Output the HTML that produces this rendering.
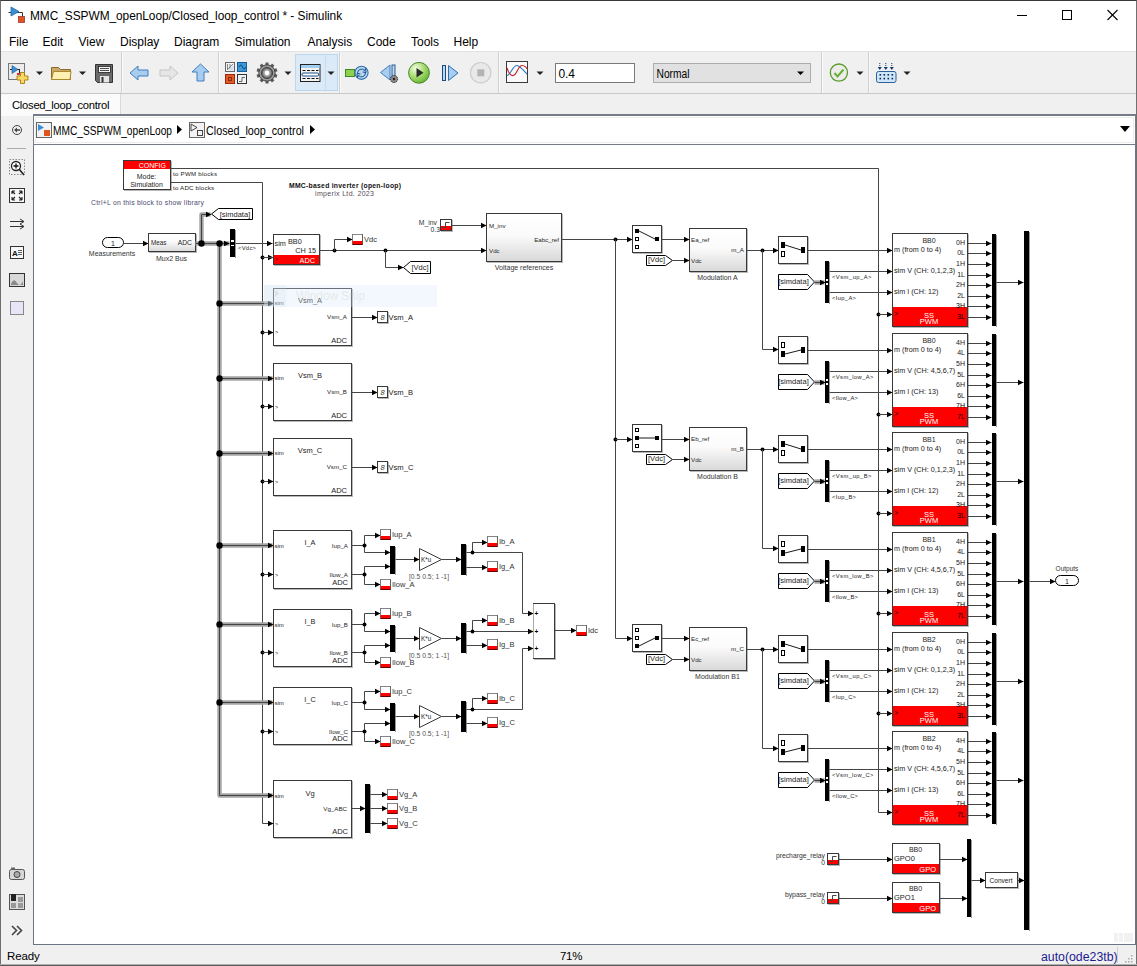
<!DOCTYPE html><html><head><meta charset="utf-8"><style>

*{margin:0;padding:0;box-sizing:border-box}
html,body{width:1137px;height:966px;overflow:hidden;background:#fff;font-family:'Liberation Sans',sans-serif}
.a{position:absolute;white-space:nowrap}
svg text{font-family:'Liberation Sans',sans-serif}

</style></head><body>
<div class="a" style="left:0;top:0;width:1137px;height:966px;background:#fff"></div>
<div class="a" style="left:30px;top:8.5px;font-size:11.9px;color:#000;letter-spacing:-0.05px">MMC_SSPWM_openLoop/Closed_loop_control * - Simulink</div>
<div class="a" style="left:9px;top:35px;font-size:12px;color:#000">File</div>
<div class="a" style="left:42.5px;top:35px;font-size:12px;color:#000">Edit</div>
<div class="a" style="left:78.5px;top:35px;font-size:12px;color:#000">View</div>
<div class="a" style="left:120px;top:35px;font-size:12px;color:#000">Display</div>
<div class="a" style="left:174px;top:35px;font-size:12px;color:#000">Diagram</div>
<div class="a" style="left:234.5px;top:35px;font-size:12px;color:#000">Simulation</div>
<div class="a" style="left:307.5px;top:35px;font-size:12px;color:#000">Analysis</div>
<div class="a" style="left:367px;top:35px;font-size:12px;color:#000">Code</div>
<div class="a" style="left:411px;top:35px;font-size:12px;color:#000">Tools</div>
<div class="a" style="left:453.5px;top:35px;font-size:12px;color:#000">Help</div>
<div class="a" style="left:1px;top:51px;width:1135px;height:1px;background:#e3e3e3"></div>
<div class="a" style="left:1px;top:52px;width:1135px;height:41px;background:#f0f0f0"></div>
<div class="a" style="left:1px;top:93px;width:1135px;height:1px;background:#c8c8c8"></div>
<div class="a" style="left:1px;top:94px;width:1135px;height:22px;background:#f0f0f0"></div>
<div class="a" style="left:1px;top:94px;width:120px;height:22px;background:#fbfbfb;border-right:1px solid #d9d9d9"></div>
<div class="a" style="left:12px;top:99px;font-size:11.2px;color:#000;letter-spacing:-0.25px">Closed_loop_control</div>
<div class="a" style="left:1px;top:116px;width:1135px;height:850px;background:#f0f0f0"></div>
<div class="a" style="left:33px;top:114px;width:1103px;height:32px;background:#fff;border:1px solid #767c86;border-top:2px solid #767c86;border-bottom:2px solid #767c86"></div>
<div class="a" style="left:35px;top:117px;width:1099px;height:26px;background:#fff;border:1px solid #ececec"></div>
<div class="a" style="left:33px;top:145px;width:1103px;height:800px;background:#fff;border-left:1px solid #6d7585;border-bottom:1px solid #6d7585;border-right:1px solid #6d7585"></div>
<div class="a" style="left:0;top:0;width:1137px;height:966px;border:1px solid #707070;border-top-color:#3a3a3a"></div>
<div class="a" style="left:0;top:964px;width:1137px;height:1px;background:#b0b0b0"></div>
<div class="a" style="left:0;top:965px;width:1137px;height:1px;background:#5a5a5a"></div>
<div class="a" style="left:7px;top:950px;font-size:11.5px;color:#000;letter-spacing:-0.15px">Ready</div>
<div class="a" style="left:560px;top:950px;font-size:11.5px;color:#000;letter-spacing:-0.3px">71%</div>
<div class="a" style="left:1041px;top:950px;font-size:12.3px;color:#1c1c92">auto(ode23tb)</div>
<div class="a" style="left:1117px;top:947px;width:1px;height:16px;background:#d0d0d0"></div>
<svg class="a" style="left:0;top:0" width="1137" height="966" viewBox="0 0 1137 966">
<defs>
<linearGradient id="g1" x1="0" y1="0" x2="0" y2="1"><stop offset="0" stop-color="#ffffff"/><stop offset="0.45" stop-color="#fbfbfb"/><stop offset="1" stop-color="#d8d8d8"/></linearGradient>
<radialGradient id="gbtn" cx="0.35" cy="0.3" r="0.8"><stop offset="0" stop-color="#f4fbe8"/><stop offset="0.5" stop-color="#a6dc6e"/><stop offset="1" stop-color="#5aae2c"/></radialGradient>
</defs>
<polyline points="8.5,12.5 22.5,12.5 22.5,17" fill="none" stroke="#333" stroke-width="1"/>
<polygon points="11,7 19,11.5 11,16" fill="#3d8ed0" stroke="#2a6aa8" stroke-width="0.8"/>
<rect x="18.5" y="16.5" width="6" height="6" fill="#e0541e" stroke="#a33" stroke-width="0.8"/>
<line x1="1017" y1="15.5" x2="1027" y2="15.5" stroke="#000" stroke-width="1"/>
<rect x="1062.5" y="10.5" width="9" height="9" fill="none" stroke="#000" stroke-width="1"/>
<line x1="1107.5" y1="10" x2="1117.5" y2="20" stroke="#000" stroke-width="1.1"/>
<line x1="1117.5" y1="10" x2="1107.5" y2="20" stroke="#000" stroke-width="1.1"/>
<rect x="8.5" y="63.5" width="16" height="16" fill="#ececec" stroke="#777" stroke-width="1"/>
<line x1="10" y1="69.5" x2="20" y2="69.5" stroke="#222"/><line x1="19.5" y1="69.5" x2="19.5" y2="74" stroke="#222"/>
<polygon points="12,65.5 18,69.5 12,73.5" fill="#3d8ed0" stroke="#1d5a9a" stroke-width="0.6"/>
<rect x="17" y="73" width="3" height="2" fill="#d33"/>
<polygon points="20.5,72.5 24.5,72.5 24.5,76 28,76 28,80 24.5,80 24.5,83.5 20.5,83.5 20.5,80 17,80 17,76 20.5,76" fill="#f8d860" stroke="#a87a10" stroke-width="0.9"/>
<polygon points="36.0,71.5 43.0,71.5 39.5,75" fill="#222"/>
<path d="M51.5,79.5 V67.5 h7 l2,2 h10 v10 z" fill="#c9a86a" stroke="#8a6a2a" stroke-width="1"/>
<path d="M51.5,79.5 L53.5,71.5 H71 L70,79.5 Z" fill="#fdf0b0" stroke="#a8882a" stroke-width="1"/>
<polygon points="79.0,71.5 86.0,71.5 82.5,75" fill="#222"/>
<path d="M95.5,64.5 H112.5 V82.5 H97.5 L95.5,80.5 Z" fill="#6a6a6a" stroke="#333" stroke-width="1"/>
<rect x="98.5" y="66.5" width="12" height="6" fill="#f4f4f4" stroke="#222" stroke-width="0.8"/>
<path d="M100,68.5 h9 M100,70.5 h9" stroke="#222" stroke-width="0.8"/>
<rect x="100" y="76" width="9" height="6.5" fill="#e6e6e6"/>
<rect x="101.5" y="77" width="2" height="5.5" fill="#333"/>
<line x1="121.5" y1="52" x2="121.5" y2="93" stroke="#d0d0d0" stroke-width="1"/>
<line x1="122.5" y1="52" x2="122.5" y2="93" stroke="#fafafa" stroke-width="1"/>
<polygon points="130,73 138,66 138,70 148,70 148,76 138,76 138,80" fill="#a9cdef" stroke="#3f7fc0" stroke-width="1"/>
<polygon points="178,73 170,66 170,70 160,70 160,76 170,76 170,80" fill="#e6e6e6" stroke="#c4c4c4" stroke-width="1"/>
<polygon points="200.5,64 209,72 204,72 204,81 197,81 197,72 192,72" fill="#a9cdef" stroke="#3f7fc0" stroke-width="1"/>
<line x1="218.5" y1="52" x2="218.5" y2="93" stroke="#d0d0d0" stroke-width="1"/>
<line x1="219.5" y1="52" x2="219.5" y2="93" stroke="#fafafa" stroke-width="1"/>
<rect x="225.5" y="62.5" width="9" height="9" fill="#f4f4f4" stroke="#666"/>
<path d="M227.5,64 v6 M230,64 v5 M233,64 l-6,6" stroke="#777" stroke-width="0.9" fill="none"/>
<path d="M228,70.5 L233.5,65 V70.5 Z" fill="#cfe0ee"/>
<rect x="237.5" y="62.5" width="9" height="9" fill="#3a9ad8" stroke="#1d5a9a"/>
<path d="M239,67 q2,-4 3.5,0 q1.5,4 3.5,0" stroke="#0d3a6a" stroke-width="0.9" fill="none"/>
<rect x="225.5" y="74.5" width="9" height="9" fill="#e45a24" stroke="#9a2a10"/>
<rect x="228.5" y="77.5" width="3" height="3" fill="none" stroke="#8a2a10"/>
<rect x="237.5" y="74.5" width="9" height="9" fill="#eef3f7" stroke="#333"/>
<path d="M239,81.5 h3 v-4 h3" stroke="#555" stroke-width="0.9" fill="none"/>
<rect x="265.5" y="62.5" width="3" height="4" fill="#5a5a5a" transform="rotate(0 267 73)"/><rect x="265.5" y="62.5" width="3" height="4" fill="#5a5a5a" transform="rotate(36 267 73)"/><rect x="265.5" y="62.5" width="3" height="4" fill="#5a5a5a" transform="rotate(72 267 73)"/><rect x="265.5" y="62.5" width="3" height="4" fill="#5a5a5a" transform="rotate(108 267 73)"/><rect x="265.5" y="62.5" width="3" height="4" fill="#5a5a5a" transform="rotate(144 267 73)"/><rect x="265.5" y="62.5" width="3" height="4" fill="#5a5a5a" transform="rotate(180 267 73)"/><rect x="265.5" y="62.5" width="3" height="4" fill="#5a5a5a" transform="rotate(216 267 73)"/><rect x="265.5" y="62.5" width="3" height="4" fill="#5a5a5a" transform="rotate(252 267 73)"/><rect x="265.5" y="62.5" width="3" height="4" fill="#5a5a5a" transform="rotate(288 267 73)"/><rect x="265.5" y="62.5" width="3" height="4" fill="#5a5a5a" transform="rotate(324 267 73)"/>
<circle cx="267" cy="73" r="8.2" fill="#9a9a9a" stroke="#3a3a3a" stroke-width="0.9"/>
<circle cx="267" cy="73" r="5.6" fill="#6a6a6a" stroke="#333" stroke-width="0.8"/>
<circle cx="267" cy="73" r="4" fill="#9c9c9c"/>
<circle cx="267" cy="73" r="2.4" fill="#fff"/>
<polygon points="284.5,71.5 291.5,71.5 288,75" fill="#222"/>
<rect x="295.5" y="54.5" width="42" height="36" fill="#dce9f6" stroke="#b9d7f0" stroke-width="1"/>
<line x1="325.5" y1="55" x2="325.5" y2="90" stroke="#c4dcf0"/>
<rect x="300.5" y="64.5" width="19.5" height="17" fill="#f2f2f2" stroke="#222"/>
<rect x="301" y="65" width="18.5" height="3" fill="#9fd0f2"/>
<path d="M302.5,70.5 h3 M307,70.5 h3 M311.5,70.5 h3 M316,70.5 h2.5 M302.5,78.5 h3 M307,78.5 h3 M311.5,78.5 h3 M316,78.5 h2.5" stroke="#111" stroke-width="1"/>
<rect x="302" y="73" width="16.5" height="3" rx="1" fill="#fff" stroke="#1a4f8f" stroke-width="1"/>
<polygon points="327.5,71.5 334.5,71.5 331,75" fill="#222"/>
<line x1="339.5" y1="52" x2="339.5" y2="93" stroke="#d0d0d0" stroke-width="1"/>
<line x1="340.5" y1="52" x2="340.5" y2="93" stroke="#fafafa" stroke-width="1"/>
<rect x="345.5" y="69.5" width="9" height="7" fill="#8fd050" stroke="#3c8a22"/>
<circle cx="361.5" cy="72.8" r="6.6" fill="#b8d8f2" stroke="#2f6fae" stroke-width="1.1"/>
<path d="M357.5,73 a4,4 0 0 1 7,-2.5 l1,-2 l0.5,4 l-3.5,-0.5 M365.5,73 a4,4 0 0 1 -7,2.5 l-1,2 l-0.5,-4 l3.5,0.5" fill="none" stroke="#1d4f8a" stroke-width="1"/>
<polygon points="380.5,72.5 390,65 390,80" fill="#a9cdef" stroke="#3f7fc0"/>
<rect x="392" y="65" width="3" height="14" fill="#b8daf4" stroke="#2a5a90"/>
<circle cx="394" cy="79" r="3.6" fill="#8a8a8a" stroke="#222" stroke-width="1" stroke-dasharray="1.2,0.8"/>
<circle cx="394" cy="79" r="1.2" fill="#222"/>
<circle cx="419" cy="72.8" r="10.4" fill="url(#gbtn)" stroke="#4a8a2a" stroke-width="1"/>
<polygon points="416.5,68 423.5,72.8 416.5,77.6" fill="#2a2a2a"/>
<rect x="442.5" y="65.5" width="3" height="15" fill="#b8daf4" stroke="#1d4a80"/>
<polygon points="448.5,65.5 458,73 448.5,80.5" fill="#a9cdef" stroke="#2f6fae"/>
<circle cx="480.7" cy="72.7" r="10.2" fill="#e9e9e9" stroke="#cdcdcd" stroke-width="1.2"/>
<rect x="477.3" y="69.3" width="7" height="7" fill="#b4b4b4"/>
<line x1="498.5" y1="52" x2="498.5" y2="93" stroke="#d0d0d0" stroke-width="1"/>
<line x1="499.5" y1="52" x2="499.5" y2="93" stroke="#fafafa" stroke-width="1"/>
<rect x="506.5" y="61.5" width="21" height="21" fill="#fafafa" stroke="#3a3a3a"/>
<path d="M507,75.5 C510,76 513,65 517,65.5 C520,66 524,71 527,74" fill="none" stroke="#2a7ac8" stroke-width="1.2"/>
<path d="M507,68 C509,74 511,76 513,75.5 C517,75 518,65.5 522,65.5 C525,65.5 527,68 527,69" fill="none" stroke="#c8282a" stroke-width="1.2"/>
<polygon points="536.5,71.5 543.5,71.5 540,75" fill="#222"/>
<rect x="555.5" y="63.5" width="79" height="19" fill="#fff" stroke="#7a7a7a"/>
<rect x="653.5" y="63.5" width="157" height="19" fill="#e1e1e1" stroke="#adadad"/>
<polygon points="797,71.5 804,71.5 800.5,75" fill="#000"/>
<line x1="821.5" y1="52" x2="821.5" y2="93" stroke="#d0d0d0" stroke-width="1"/>
<line x1="822.5" y1="52" x2="822.5" y2="93" stroke="#fafafa" stroke-width="1"/>
<circle cx="838.9" cy="72.6" r="8.6" fill="#ececec" stroke="#5a9a2a" stroke-width="1.3"/>
<path d="M834.5,73 l3,3.5 l6,-7" fill="none" stroke="#6ab030" stroke-width="2"/>
<polygon points="856.5,71.5 863.5,71.5 860,75" fill="#222"/>
<line x1="868.5" y1="52" x2="868.5" y2="93" stroke="#d0d0d0" stroke-width="1"/>
<line x1="869.5" y1="52" x2="869.5" y2="93" stroke="#fafafa" stroke-width="1"/>
<rect x="876.5" y="71.5" width="19.5" height="11" rx="2" fill="#cfe5f8" stroke="#2d5f9a"/>
<rect x="879.5" y="74" width="1.6" height="1.6" fill="#0a2a60"/><rect x="879.5" y="77.8" width="1.6" height="1.6" fill="#0a2a60"/>
<rect x="883.5" y="74" width="1.6" height="1.6" fill="#0a2a60"/><rect x="883.5" y="77.8" width="1.6" height="1.6" fill="#0a2a60"/>
<rect x="887.5" y="74" width="1.6" height="1.6" fill="#0a2a60"/><rect x="887.5" y="77.8" width="1.6" height="1.6" fill="#0a2a60"/>
<rect x="891.5" y="74" width="1.6" height="1.6" fill="#0a2a60"/><rect x="891.5" y="77.8" width="1.6" height="1.6" fill="#0a2a60"/>
<line x1="879.8" y1="63" x2="879.8" y2="68" stroke="#0a3a70" stroke-dasharray="1,1"/><polygon points="877.8,67 881.8,67 879.8,70" fill="#0a3a70"/>
<line x1="885.8" y1="63" x2="885.8" y2="68" stroke="#0a3a70" stroke-dasharray="1,1"/><polygon points="883.8,67 887.8,67 885.8,70" fill="#0a3a70"/>
<line x1="891.8" y1="63" x2="891.8" y2="68" stroke="#0a3a70" stroke-dasharray="1,1"/><polygon points="889.8,67 893.8,67 891.8,70" fill="#0a3a70"/>
<polygon points="903.5,71.5 910.5,71.5 907,75" fill="#222"/>
<circle cx="17" cy="130" r="4.5" fill="none" stroke="#444" stroke-width="1"/>
<polygon points="14,130 17,127.5 17,132.5" fill="#444"/><line x1="16" y1="130" x2="20" y2="130" stroke="#444" stroke-width="1.5"/>
<rect x="36.5" y="122.5" width="15" height="15" fill="#f2f2f2" stroke="#666"/>
<polygon points="38,124 44,127.5 38,131" fill="#3d8ed0"/>
<rect x="44" y="130" width="6" height="6" fill="#e0541e"/>
<polygon points="177,125 182,129.5 177,134" fill="#000"/>
<rect x="189.5" y="122.5" width="15" height="15" fill="#f2f2f2" stroke="#666"/>
<polygon points="191,124 197,127.5 191,131" fill="none" stroke="#333" stroke-width="0.9"/>
<rect x="197.5" y="130.5" width="5" height="5" fill="none" stroke="#333" stroke-width="0.9"/>
<polygon points="310,125 315,129.5 310,134" fill="#000"/>
<polygon points="1120,126 1130,126 1125,132" fill="#000"/>
<text x="53" y="134.5" font-size="12" fill="#000" textLength="119" lengthAdjust="spacingAndGlyphs">MMC_SSPWM_openLoop</text>
<text x="206" y="134.5" font-size="12" fill="#000" textLength="98" lengthAdjust="spacingAndGlyphs">Closed_loop_control</text>
<line x1="7" y1="148.5" x2="26" y2="148.5" stroke="#aaa"/>
<rect x="9.5" y="159.5" width="15" height="15" fill="none" stroke="#888" stroke-dasharray="1.5,1.5"/>
<circle cx="16" cy="166" r="4.5" fill="#fff" stroke="#222" stroke-width="1.3"/>
<line x1="19" y1="169" x2="24" y2="175" stroke="#222" stroke-width="1.6"/>
<path d="M13.5,166 h5 M16,163.5 v5" stroke="#111" stroke-width="1.3"/>
<rect x="9.5" y="188.5" width="15" height="14" fill="#f7f7f7" stroke="#333"/>
<path d="M12,191 l3,3 M12,191 h3 M12,191 v3 M22,191 l-3,3 M22,191 h-3 M22,191 v3 M12,200 l3,-3 M12,200 h3 M12,200 v-3 M22,200 l-3,-3 M22,200 h-3 M22,200 v-3" stroke="#222" stroke-width="1.1" fill="none"/>
<path d="M10,221.5 h13 M10,226.5 h13 M20,219 l4,2.5 l-4,2.5 M20,224 l4,2.5 l-4,2.5" stroke="#333" stroke-width="1" fill="none"/>
<rect x="10.5" y="246.5" width="13" height="12" fill="#f7f7f7" stroke="#333"/>
<text x="12" y="256" font-size="8" font-weight="bold" fill="#111">A</text>
<path d="M18,250.5 h4 M18,252.5 h4 M18,254.5 h4" stroke="#333" stroke-width="0.8"/>
<rect x="9.5" y="273.5" width="15" height="13" fill="#d9d9d9" stroke="#333"/>
<path d="M11,284 q3,-7 6,-1 q3,5 6,-2 v4 h-12 z" fill="#8a8a8a"/>
<rect x="10.5" y="301.5" width="13" height="13" fill="#e6e6f6" stroke="#888"/>
<rect x="9.5" y="869.5" width="15" height="10" rx="2" fill="#d6d6d6" stroke="#555"/>
<circle cx="17" cy="874.5" r="3" fill="#aaa" stroke="#444"/>
<rect x="11" y="867.5" width="4" height="2" fill="#666"/>
<rect x="9.5" y="894.5" width="15" height="15" fill="#ddd" stroke="#555"/>
<rect x="11" y="894" width="5" height="7" fill="#222"/>
<rect x="18" y="897" width="5" height="5" fill="#999"/><rect x="11" y="903" width="5" height="5" fill="#999"/><rect x="18" y="903" width="5" height="5" fill="#999"/>
<path d="M12,926 l4.5,4.5 l-4.5,4.5 M17,926 l4.5,4.5 l-4.5,4.5" stroke="#444" stroke-width="1.6" fill="none"/>
<rect x="1131" y="955" width="1.5" height="1.5" fill="#aaa"/>
<rect x="1128" y="958" width="1.5" height="1.5" fill="#aaa"/>
<rect x="1131" y="958" width="1.5" height="1.5" fill="#aaa"/>
<rect x="1125" y="961" width="1.5" height="1.5" fill="#aaa"/>
<rect x="1128" y="961" width="1.5" height="1.5" fill="#aaa"/>
<rect x="1131" y="961" width="1.5" height="1.5" fill="#aaa"/>
<rect x="1114" y="933" width="4" height="9" fill="#f1f1f1"/><rect x="1119" y="933" width="4" height="9" fill="#f1f1f1"/><rect x="1124" y="933" width="9" height="9" fill="#f1f1f1"/>
<text x="558.5" y="78" font-size="12" fill="#000" textLength="16.5" lengthAdjust="spacing">0.4</text>
<text x="656.5" y="78" font-size="12" fill="#000" textLength="33" lengthAdjust="spacingAndGlyphs">Normal</text>
<rect x="124.5" y="161.5" width="47" height="29" fill="none" stroke="#b8b8b8" stroke-width="1"/>
<rect x="123.5" y="160.5" width="47" height="29" fill="#fff" stroke="#383838" stroke-width="1"/>
<rect x="124" y="161" width="46" height="8" fill="#f00"/>
<text x="166" y="167.5" font-size="7" text-anchor="end" fill="#fff" font-weight="normal" >CONFIG</text>
<text x="146.5" y="178.5" font-size="7" text-anchor="middle" fill="#1e1e1e" font-weight="normal" >Mode:</text>
<text x="146.5" y="186.5" font-size="7" text-anchor="middle" fill="#1e1e1e" font-weight="normal" >Simulation</text>
<polyline points="170.5,168.5 878.5,168.5 878.5,812.5 892.5,812.5" fill="none" stroke="#454545" stroke-width="1"/>
<polygon points="887.0,809.7 892.5,812.5 887.0,815.3" fill="#000"/>
<text x="173" y="175.5" font-size="6.2" text-anchor="start" fill="#222" font-weight="normal" textLength="44" lengthAdjust="spacing">to PWM blocks</text>
<polyline points="170.5,182.5 262.5,182.5 262.5,823.5 273.5,823.5" fill="none" stroke="#454545" stroke-width="1"/>
<polygon points="268.0,820.7 273.5,823.5 268.0,826.3" fill="#000"/>
<text x="173" y="189.5" font-size="6.2" text-anchor="start" fill="#222" font-weight="normal" textLength="41" lengthAdjust="spacing">to ADC blocks</text>
<text x="91" y="205" font-size="6.8" text-anchor="start" fill="#4a4a70" font-weight="normal" textLength="113" lengthAdjust="spacing">Ctrl+L on this block to show library</text>
<text x="289" y="187.5" font-size="6.8" text-anchor="start" fill="#111" font-weight="bold" textLength="112" lengthAdjust="spacing">MMC-based inverter (open-loop)</text>
<text x="315" y="196" font-size="7" text-anchor="start" fill="#5a4a5a" font-weight="normal" textLength="59" lengthAdjust="spacing">imperix Ltd. 2023</text>
<rect x="102.5" y="237.5" width="21" height="10" rx="5" fill="#fff" stroke="#000"/>
<text x="113" y="245.5" font-size="7" text-anchor="middle" fill="#1e1e1e" font-weight="normal" >1</text>
<text x="112" y="256" font-size="7" text-anchor="middle" fill="#333" font-weight="normal" >Measurements</text>
<polyline points="123.5,243.5 148.5,243.5" fill="none" stroke="#454545" stroke-width="1"/>
<polygon points="143.0,240.7 148.5,243.5 143.0,246.3" fill="#000"/>
<rect x="149.5" y="234.5" width="47" height="18" fill="none" stroke="#b8b8b8" stroke-width="1"/>
<rect x="148.5" y="233.5" width="47" height="18" fill="url(#g1)" stroke="#383838" stroke-width="1"/>
<text x="151" y="245" font-size="6.3" text-anchor="start" fill="#1e1e1e" font-weight="normal" >Meas</text>
<text x="192" y="245" font-size="6.8" text-anchor="end" fill="#1e1e1e" font-weight="normal" >ADC</text>
<text x="171.5" y="261" font-size="7" text-anchor="middle" fill="#333" font-weight="normal" >Mux2 Bus</text>
<polyline points="195.5,243.5 229.5,243.5" fill="none" stroke="#a4a4a4" stroke-width="4.4" stroke-linejoin="round"/>
<polyline points="195.5,243.5 229.5,243.5" fill="none" stroke="#444" stroke-width="1"/>
<polygon points="224.0,240.7 229.5,243.5 224.0,246.3" fill="#000"/>
<polyline points="201.5,243.5 201.5,214.5 210.5,214.5" fill="none" stroke="#a4a4a4" stroke-width="4.4" stroke-linejoin="round"/>
<polyline points="201.5,243.5 201.5,214.5 210.5,214.5" fill="none" stroke="#444" stroke-width="1"/>
<polygon points="206.0,211.7 211.5,214.5 206.0,217.3" fill="#000"/>
<polygon points="211.5,214.0 218.5,208.5 252.5,208.5 252.5,219.5 218.5,219.5" fill="#fff" stroke="#000" stroke-width="1"/>
<text x="235.0" y="216.5" font-size="7.5" text-anchor="middle" fill="#1e1e1e" font-weight="normal" >[simdata]</text>
<rect x="230" y="229" width="5" height="28" fill="#000"/>
<rect x="235" y="230" width="1" height="28" fill="#9a9a9a"/>
<rect x="231" y="240" width="3" height="2" fill="#fff"/>
<rect x="231" y="245" width="3" height="1" fill="#fff"/>
<text x="238" y="250" font-size="5.8" text-anchor="start" fill="#222" font-weight="normal" textLength="18" lengthAdjust="spacing">&lt;Vdc&gt;</text>
<polyline points="235.5,243.5 272.5,243.5" fill="none" stroke="#454545" stroke-width="1"/>
<polygon points="267.0,240.7 272.5,243.5 267.0,246.3" fill="#000"/>
<polyline points="219.5,243.5 219.5,795.5 272.5,795.5" fill="none" stroke="#a4a4a4" stroke-width="4.4" stroke-linejoin="round"/>
<polyline points="219.5,243.5 219.5,795.5 272.5,795.5" fill="none" stroke="#444" stroke-width="1"/>
<polygon points="268.0,792.7 273.5,795.5 268.0,798.3" fill="#000"/>
<polyline points="219.5,303.5 272.5,303.5" fill="none" stroke="#a4a4a4" stroke-width="4.4" stroke-linejoin="round"/>
<polyline points="219.5,303.5 272.5,303.5" fill="none" stroke="#444" stroke-width="1"/>
<polygon points="268.0,300.7 273.5,303.5 268.0,306.3" fill="#000"/>
<polyline points="219.5,378.5 272.5,378.5" fill="none" stroke="#a4a4a4" stroke-width="4.4" stroke-linejoin="round"/>
<polyline points="219.5,378.5 272.5,378.5" fill="none" stroke="#444" stroke-width="1"/>
<polygon points="268.0,375.7 273.5,378.5 268.0,381.3" fill="#000"/>
<polyline points="219.5,453.5 272.5,453.5" fill="none" stroke="#a4a4a4" stroke-width="4.4" stroke-linejoin="round"/>
<polyline points="219.5,453.5 272.5,453.5" fill="none" stroke="#444" stroke-width="1"/>
<polygon points="268.0,450.7 273.5,453.5 268.0,456.3" fill="#000"/>
<polyline points="219.5,545.5 272.5,545.5" fill="none" stroke="#a4a4a4" stroke-width="4.4" stroke-linejoin="round"/>
<polyline points="219.5,545.5 272.5,545.5" fill="none" stroke="#444" stroke-width="1"/>
<polygon points="268.0,542.7 273.5,545.5 268.0,548.3" fill="#000"/>
<polyline points="219.5,624.5 272.5,624.5" fill="none" stroke="#a4a4a4" stroke-width="4.4" stroke-linejoin="round"/>
<polyline points="219.5,624.5 272.5,624.5" fill="none" stroke="#444" stroke-width="1"/>
<polygon points="268.0,621.7 273.5,624.5 268.0,627.3" fill="#000"/>
<polyline points="219.5,702.5 272.5,702.5" fill="none" stroke="#a4a4a4" stroke-width="4.4" stroke-linejoin="round"/>
<polyline points="219.5,702.5 272.5,702.5" fill="none" stroke="#444" stroke-width="1"/>
<polygon points="268.0,699.7 273.5,702.5 268.0,705.3" fill="#000"/>
<circle cx="219.5" cy="303.5" r="3.2" fill="#000"/>
<circle cx="219.5" cy="378.5" r="3.2" fill="#000"/>
<circle cx="219.5" cy="453.5" r="3.2" fill="#000"/>
<circle cx="219.5" cy="545.5" r="3.2" fill="#000"/>
<circle cx="219.5" cy="624.5" r="3.2" fill="#000"/>
<circle cx="219.5" cy="702.5" r="3.2" fill="#000"/>
<circle cx="201.5" cy="243.5" r="3.2" fill="#000"/>
<circle cx="219.5" cy="243.5" r="3.2" fill="#000"/>
<rect x="274.5" y="235.5" width="46" height="30" fill="none" stroke="#b8b8b8" stroke-width="1"/>
<rect x="273.5" y="234.5" width="46" height="30" fill="#fff" stroke="#383838" stroke-width="1"/>
<rect x="274" y="255" width="45" height="9" fill="#f00"/>
<text x="274.5" y="245.5" font-size="7.3" text-anchor="start" fill="#1e1e1e" font-weight="normal" >sim</text>
<text x="288" y="244" font-size="7.3" text-anchor="start" fill="#1e1e1e" font-weight="normal" >BB0</text>
<text x="316" y="252.5" font-size="7.3" text-anchor="end" fill="#1e1e1e" font-weight="normal" >CH 15</text>
<text x="315" y="262.5" font-size="7.3" text-anchor="end" fill="#fff" font-weight="normal" >ADC</text>
<text x="275" y="260.5" font-size="5" text-anchor="start" fill="#000" font-weight="normal" >&gt;</text>
<circle cx="262.5" cy="257.5" r="2" fill="#000"/>
<polygon points="268.0,254.7 273.5,257.5 268.0,260.3" fill="#000"/>
<polyline points="262.5,257.5 273.5,257.5" fill="none" stroke="#454545" stroke-width="1"/>
<polyline points="319.5,250.5 486.5,250.5" fill="none" stroke="#454545" stroke-width="1"/>
<polygon points="481.0,247.7 486.5,250.5 481.0,253.3" fill="#000"/>
<circle cx="334.5" cy="250.5" r="2" fill="#000"/>
<polyline points="334.5,250.5 334.5,239.5 352.5,239.5" fill="none" stroke="#454545" stroke-width="1"/>
<polygon points="347.0,236.7 352.5,239.5 347.0,242.3" fill="#000"/>
<rect x="352.5" y="234.5" width="10" height="10" fill="#fff" stroke="#858585" stroke-width="1"/>
<rect x="352" y="241" width="11" height="4" fill="#f00"/>
<rect x="352" y="244" width="11" height="1" fill="#600"/>
<rect x="352" y="234" width="1" height="11" fill="#777" fill-opacity="0.6"/>
<rect x="362" y="234" width="1" height="11" fill="#555" fill-opacity="0.7"/>
<text x="364" y="241.6" font-size="7.5" text-anchor="start" fill="#333" font-weight="normal" >Vdc</text>
<circle cx="385.5" cy="250.5" r="2" fill="#000"/>
<polyline points="385.5,250.5 385.5,267.5 403.5,267.5" fill="none" stroke="#454545" stroke-width="1"/>
<polygon points="398.0,264.7 403.5,267.5 398.0,270.3" fill="#000"/>
<polygon points="403.5,267.5 410.5,261.5 430.5,261.5 430.5,273.5 410.5,273.5" fill="#fff" stroke="#000" stroke-width="1"/>
<text x="420.0" y="270.0" font-size="7.5" text-anchor="middle" fill="#1e1e1e" font-weight="normal" >[Vdc]</text>
<rect x="441.5" y="220.5" width="11" height="11" fill="none" stroke="#b8b8b8" stroke-width="1"/>
<rect x="440.5" y="219.5" width="11" height="11" fill="#fff" stroke="#383838" stroke-width="1"/>
<rect x="441" y="226" width="10" height="4" fill="#f00"/>
<polyline points="442.5,227.5 445.5,227.5 445.5,222.5 449.5,222.5" fill="none" stroke="#454545" stroke-width="1"/>
<text x="437" y="225" font-size="6.8" text-anchor="end" fill="#333" font-weight="normal" >M_inv</text>
<text x="440" y="231.5" font-size="6.8" text-anchor="end" fill="#333" font-weight="normal" >0.3</text>
<polyline points="451.5,225.5 486.5,225.5" fill="none" stroke="#454545" stroke-width="1"/>
<polygon points="481.0,222.7 486.5,225.5 481.0,228.3" fill="#000"/>
<rect x="487.5" y="214.5" width="75" height="48" fill="none" stroke="#b8b8b8" stroke-width="1"/>
<rect x="486.5" y="213.5" width="75" height="48" fill="url(#g1)" stroke="#383838" stroke-width="1"/>
<text x="489" y="227.5" font-size="6.2" text-anchor="start" fill="#1e1e1e" font-weight="normal" >M_inv</text>
<text x="489" y="252.5" font-size="6.2" text-anchor="start" fill="#1e1e1e" font-weight="normal" >Vdc</text>
<text x="559" y="242" font-size="6.2" text-anchor="end" fill="#1e1e1e" font-weight="normal" >Eabc_ref</text>
<text x="524" y="270" font-size="7" text-anchor="middle" fill="#333" font-weight="normal" >Voltage references</text>
<polyline points="561.5,239.5 632.5,239.5" fill="none" stroke="#454545" stroke-width="1"/>
<polygon points="627.0,236.7 632.5,239.5 627.0,242.3" fill="#000"/>
<circle cx="615.5" cy="239.5" r="2" fill="#000"/>
<polyline points="615.5,239.5 615.5,638.5 632.5,638.5" fill="none" stroke="#454545" stroke-width="1"/>
<polygon points="627.0,635.7 632.5,638.5 627.0,641.3" fill="#000"/>
<circle cx="615.5" cy="439.5" r="2" fill="#000"/>
<polyline points="615.5,439.5 632.5,439.5" fill="none" stroke="#454545" stroke-width="1"/>
<polygon points="627.0,436.7 632.5,439.5 627.0,442.3" fill="#000"/>
<rect x="274.5" y="289.5" width="78" height="57" fill="none" stroke="#b8b8b8" stroke-width="1"/>
<rect x="273.5" y="288.5" width="78" height="57" fill="#fff" stroke="#383838" stroke-width="1"/>
<text x="274.5" y="305" font-size="6" text-anchor="start" fill="#222" font-weight="normal" >sim</text>
<text x="275" y="334" font-size="5.5" text-anchor="start" fill="#222" font-weight="normal" >&gt;</text>
<text x="310" y="303" font-size="7.5" text-anchor="middle" fill="#1e1e1e" font-weight="normal" >Vsm_A</text>
<text x="347" y="319" font-size="6.2" text-anchor="end" fill="#1e1e1e" font-weight="normal" >Vsm_A</text>
<text x="347" y="343" font-size="7.5" text-anchor="end" fill="#1e1e1e" font-weight="normal" >ADC</text>
<circle cx="262.5" cy="332.5" r="2" fill="#000"/>
<polyline points="262.5,332.5 273.5,332.5" fill="none" stroke="#454545" stroke-width="1"/>
<polygon points="268.0,329.7 273.5,332.5 268.0,335.3" fill="#000"/>
<polyline points="351.5,317.5 377.5,317.5" fill="none" stroke="#454545" stroke-width="1"/>
<polygon points="372.0,314.7 377.5,317.5 372.0,320.3" fill="#000"/>
<rect x="378.5" y="312.5" width="10" height="11" fill="none" stroke="#b8b8b8" stroke-width="1"/>
<rect x="377.5" y="311.5" width="10" height="11" fill="#fff" stroke="#383838" stroke-width="1"/>
<text x="382.5" y="319.5" font-size="7.5" text-anchor="middle" fill="#333" font-weight="normal" font-style="italic">8</text>
<text x="388.5" y="319.5" font-size="7.6" text-anchor="start" fill="#1a1a1a" font-weight="normal" >Vsm_A</text>
<rect x="274.5" y="364.5" width="78" height="57" fill="none" stroke="#b8b8b8" stroke-width="1"/>
<rect x="273.5" y="363.5" width="78" height="57" fill="#fff" stroke="#383838" stroke-width="1"/>
<text x="274.5" y="380" font-size="6" text-anchor="start" fill="#222" font-weight="normal" >sim</text>
<text x="275" y="408.5" font-size="5.5" text-anchor="start" fill="#222" font-weight="normal" >&gt;</text>
<text x="310" y="378" font-size="7.5" text-anchor="middle" fill="#1e1e1e" font-weight="normal" >Vsm_B</text>
<text x="347" y="394" font-size="6.2" text-anchor="end" fill="#1e1e1e" font-weight="normal" >Vsm_B</text>
<text x="347" y="418" font-size="7.5" text-anchor="end" fill="#1e1e1e" font-weight="normal" >ADC</text>
<circle cx="262.5" cy="406.5" r="2" fill="#000"/>
<polyline points="262.5,406.5 273.5,406.5" fill="none" stroke="#454545" stroke-width="1"/>
<polygon points="268.0,403.7 273.5,406.5 268.0,409.3" fill="#000"/>
<polyline points="351.5,392.5 377.5,392.5" fill="none" stroke="#454545" stroke-width="1"/>
<polygon points="372.0,389.7 377.5,392.5 372.0,395.3" fill="#000"/>
<rect x="378.5" y="387.5" width="10" height="11" fill="none" stroke="#b8b8b8" stroke-width="1"/>
<rect x="377.5" y="386.5" width="10" height="11" fill="#fff" stroke="#383838" stroke-width="1"/>
<text x="382.5" y="394.5" font-size="7.5" text-anchor="middle" fill="#333" font-weight="normal" font-style="italic">8</text>
<text x="388.5" y="394.5" font-size="7.6" text-anchor="start" fill="#1a1a1a" font-weight="normal" >Vsm_B</text>
<rect x="274.5" y="439.5" width="78" height="57" fill="none" stroke="#b8b8b8" stroke-width="1"/>
<rect x="273.5" y="438.5" width="78" height="57" fill="#fff" stroke="#383838" stroke-width="1"/>
<text x="274.5" y="455" font-size="6" text-anchor="start" fill="#222" font-weight="normal" >sim</text>
<text x="275" y="483.5" font-size="5.5" text-anchor="start" fill="#222" font-weight="normal" >&gt;</text>
<text x="310" y="453" font-size="7.5" text-anchor="middle" fill="#1e1e1e" font-weight="normal" >Vsm_C</text>
<text x="347" y="469" font-size="6.2" text-anchor="end" fill="#1e1e1e" font-weight="normal" >Vsm_C</text>
<text x="347" y="493" font-size="7.5" text-anchor="end" fill="#1e1e1e" font-weight="normal" >ADC</text>
<circle cx="262.5" cy="481.5" r="2" fill="#000"/>
<polyline points="262.5,481.5 273.5,481.5" fill="none" stroke="#454545" stroke-width="1"/>
<polygon points="268.0,478.7 273.5,481.5 268.0,484.3" fill="#000"/>
<polyline points="351.5,467.5 377.5,467.5" fill="none" stroke="#454545" stroke-width="1"/>
<polygon points="372.0,464.7 377.5,467.5 372.0,470.3" fill="#000"/>
<rect x="378.5" y="462.5" width="10" height="11" fill="none" stroke="#b8b8b8" stroke-width="1"/>
<rect x="377.5" y="461.5" width="10" height="11" fill="#fff" stroke="#383838" stroke-width="1"/>
<text x="382.5" y="469.5" font-size="7.5" text-anchor="middle" fill="#333" font-weight="normal" font-style="italic">8</text>
<text x="388.5" y="469.5" font-size="7.6" text-anchor="start" fill="#1a1a1a" font-weight="normal" >Vsm_C</text>
<rect x="274.5" y="531.5" width="78" height="58" fill="none" stroke="#b8b8b8" stroke-width="1"/>
<rect x="273.5" y="530.5" width="78" height="58" fill="#fff" stroke="#383838" stroke-width="1"/>
<text x="274.5" y="547.5" font-size="6" text-anchor="start" fill="#222" font-weight="normal" >sim</text>
<text x="275" y="576.5" font-size="5.5" text-anchor="start" fill="#222" font-weight="normal" >&gt;</text>
<text x="310" y="545" font-size="7.3" text-anchor="middle" fill="#1e1e1e" font-weight="normal" >I_A</text>
<text x="348" y="547.5" font-size="6.2" text-anchor="end" fill="#1e1e1e" font-weight="normal" >Iup_A</text>
<text x="348" y="576.5" font-size="6.2" text-anchor="end" fill="#1e1e1e" font-weight="normal" >Ilow_A</text>
<text x="348" y="585" font-size="7.5" text-anchor="end" fill="#1e1e1e" font-weight="normal" >ADC</text>
<circle cx="262.5" cy="574.5" r="2" fill="#000"/>
<polyline points="262.5,574.5 273.5,574.5" fill="none" stroke="#454545" stroke-width="1"/>
<polygon points="268.0,571.7 273.5,574.5 268.0,577.3" fill="#000"/>
<polyline points="351.5,545.5 364.5,545.5" fill="none" stroke="#454545" stroke-width="1"/>
<polyline points="351.5,574.5 364.5,574.5" fill="none" stroke="#454545" stroke-width="1"/>
<polyline points="364.5,545.5 364.5,535.5 380.5,535.5" fill="none" stroke="#454545" stroke-width="1"/>
<polygon points="375.0,532.7 380.5,535.5 375.0,538.3" fill="#000"/>
<rect x="380.5" y="529.5" width="10" height="10" fill="#fff" stroke="#858585" stroke-width="1"/>
<rect x="380" y="536" width="11" height="4" fill="#f00"/>
<rect x="380" y="539" width="11" height="1" fill="#600"/>
<rect x="380" y="529" width="1" height="11" fill="#777" fill-opacity="0.6"/>
<rect x="390" y="529" width="1" height="11" fill="#555" fill-opacity="0.7"/>
<text x="392" y="536.6" font-size="7.5" text-anchor="start" fill="#333" font-weight="normal" >Iup_A</text>
<polyline points="364.5,574.5 364.5,584.5 380.5,584.5" fill="none" stroke="#454545" stroke-width="1"/>
<polygon points="375.0,581.7 380.5,584.5 375.0,587.3" fill="#000"/>
<rect x="380.5" y="579.5" width="10" height="10" fill="#fff" stroke="#858585" stroke-width="1"/>
<rect x="380" y="586" width="11" height="4" fill="#f00"/>
<rect x="380" y="589" width="11" height="1" fill="#600"/>
<rect x="380" y="579" width="1" height="11" fill="#777" fill-opacity="0.6"/>
<rect x="390" y="579" width="1" height="11" fill="#555" fill-opacity="0.7"/>
<text x="392" y="586.6" font-size="7.5" text-anchor="start" fill="#333" font-weight="normal" >Ilow_A</text>
<polyline points="364.5,552.5 390.5,552.5" fill="none" stroke="#454545" stroke-width="1"/>
<polygon points="385.0,549.7 390.5,552.5 385.0,555.3" fill="#000"/>
<polyline points="364.5,545.5 364.5,552.5" fill="none" stroke="#454545" stroke-width="1"/>
<polyline points="364.5,566.5 390.5,566.5" fill="none" stroke="#454545" stroke-width="1"/>
<polygon points="385.0,563.7 390.5,566.5 385.0,569.3" fill="#000"/>
<polyline points="364.5,574.5 364.5,566.5" fill="none" stroke="#454545" stroke-width="1"/>
<circle cx="364.5" cy="545.5" r="2" fill="#000"/>
<circle cx="364.5" cy="574.5" r="2" fill="#000"/>
<rect x="390" y="546" width="5" height="28" fill="#000"/>
<rect x="395" y="547" width="1" height="28" fill="#9a9a9a"/>
<polyline points="395.5,559.5 419.5,559.5" fill="none" stroke="#454545" stroke-width="1"/>
<polygon points="414.0,556.7 419.5,559.5 414.0,562.3" fill="#000"/>
<polygon points="419.5,548.5 441.5,559.5 419.5,570.5" fill="#fff" stroke="#383838"/>
<text x="421" y="562" font-size="6.3" text-anchor="start" fill="#1e1e1e" font-weight="normal" >K*u</text>
<text x="429" y="579" font-size="6.8" text-anchor="middle" fill="#555" font-weight="normal" >[0.5 0.5; 1 -1]</text>
<polyline points="441.5,559.5 461.5,559.5" fill="none" stroke="#454545" stroke-width="1"/>
<polygon points="456.0,556.7 461.5,559.5 456.0,562.3" fill="#000"/>
<rect x="461" y="544" width="5" height="31" fill="#000"/>
<rect x="466" y="545" width="1" height="31" fill="#9a9a9a"/>
<polyline points="466.5,552.5 472.5,552.5" fill="none" stroke="#454545" stroke-width="1"/>
<polyline points="472.5,552.5 472.5,542.5 487.5,542.5" fill="none" stroke="#454545" stroke-width="1"/>
<polygon points="482.0,539.7 487.5,542.5 482.0,545.3" fill="#000"/>
<rect x="487.5" y="536.5" width="10" height="10" fill="#fff" stroke="#858585" stroke-width="1"/>
<rect x="487" y="543" width="11" height="4" fill="#f00"/>
<rect x="487" y="546" width="11" height="1" fill="#600"/>
<rect x="487" y="536" width="1" height="11" fill="#777" fill-opacity="0.6"/>
<rect x="497" y="536" width="1" height="11" fill="#555" fill-opacity="0.7"/>
<text x="499" y="543.6" font-size="7.5" text-anchor="start" fill="#333" font-weight="normal" >Ib_A</text>
<polyline points="466.5,567.5 487.5,567.5" fill="none" stroke="#454545" stroke-width="1"/>
<polygon points="482.0,564.7 487.5,567.5 482.0,570.3" fill="#000"/>
<rect x="487.5" y="561.5" width="10" height="10" fill="#fff" stroke="#858585" stroke-width="1"/>
<rect x="487" y="568" width="11" height="4" fill="#f00"/>
<rect x="487" y="571" width="11" height="1" fill="#600"/>
<rect x="487" y="561" width="1" height="11" fill="#777" fill-opacity="0.6"/>
<rect x="497" y="561" width="1" height="11" fill="#555" fill-opacity="0.7"/>
<text x="499" y="568.6" font-size="7.5" text-anchor="start" fill="#333" font-weight="normal" >Ig_A</text>
<polyline points="472.5,552.5 522.5,552.5 522.5,613.5 533.5,613.5" fill="none" stroke="#454545" stroke-width="1"/>
<polygon points="528.0,610.7 533.5,613.5 528.0,616.3" fill="#000"/>
<rect x="274.5" y="610.5" width="78" height="57" fill="none" stroke="#b8b8b8" stroke-width="1"/>
<rect x="273.5" y="609.5" width="78" height="57" fill="#fff" stroke="#383838" stroke-width="1"/>
<text x="274.5" y="626.5" font-size="6" text-anchor="start" fill="#222" font-weight="normal" >sim</text>
<text x="275" y="654.5" font-size="5.5" text-anchor="start" fill="#222" font-weight="normal" >&gt;</text>
<text x="310" y="624" font-size="7.3" text-anchor="middle" fill="#1e1e1e" font-weight="normal" >I_B</text>
<text x="348" y="626.5" font-size="6.2" text-anchor="end" fill="#1e1e1e" font-weight="normal" >Iup_B</text>
<text x="348" y="654.5" font-size="6.2" text-anchor="end" fill="#1e1e1e" font-weight="normal" >Ilow_B</text>
<text x="348" y="663" font-size="7.5" text-anchor="end" fill="#1e1e1e" font-weight="normal" >ADC</text>
<circle cx="262.5" cy="652.5" r="2" fill="#000"/>
<polyline points="262.5,652.5 273.5,652.5" fill="none" stroke="#454545" stroke-width="1"/>
<polygon points="268.0,649.7 273.5,652.5 268.0,655.3" fill="#000"/>
<polyline points="351.5,624.5 364.5,624.5" fill="none" stroke="#454545" stroke-width="1"/>
<polyline points="351.5,652.5 364.5,652.5" fill="none" stroke="#454545" stroke-width="1"/>
<polyline points="364.5,624.5 364.5,613.5 380.5,613.5" fill="none" stroke="#454545" stroke-width="1"/>
<polygon points="375.0,610.7 380.5,613.5 375.0,616.3" fill="#000"/>
<rect x="380.5" y="608.5" width="10" height="10" fill="#fff" stroke="#858585" stroke-width="1"/>
<rect x="380" y="615" width="11" height="4" fill="#f00"/>
<rect x="380" y="618" width="11" height="1" fill="#600"/>
<rect x="380" y="608" width="1" height="11" fill="#777" fill-opacity="0.6"/>
<rect x="390" y="608" width="1" height="11" fill="#555" fill-opacity="0.7"/>
<text x="392" y="615.6" font-size="7.5" text-anchor="start" fill="#333" font-weight="normal" >Iup_B</text>
<polyline points="364.5,652.5 364.5,662.5 380.5,662.5" fill="none" stroke="#454545" stroke-width="1"/>
<polygon points="375.0,659.7 380.5,662.5 375.0,665.3" fill="#000"/>
<rect x="380.5" y="657.5" width="10" height="10" fill="#fff" stroke="#858585" stroke-width="1"/>
<rect x="380" y="664" width="11" height="4" fill="#f00"/>
<rect x="380" y="667" width="11" height="1" fill="#600"/>
<rect x="380" y="657" width="1" height="11" fill="#777" fill-opacity="0.6"/>
<rect x="390" y="657" width="1" height="11" fill="#555" fill-opacity="0.7"/>
<text x="392" y="664.6" font-size="7.5" text-anchor="start" fill="#333" font-weight="normal" >Ilow_B</text>
<polyline points="364.5,631.5 390.5,631.5" fill="none" stroke="#454545" stroke-width="1"/>
<polygon points="385.0,628.7 390.5,631.5 385.0,634.3" fill="#000"/>
<polyline points="364.5,624.5 364.5,631.5" fill="none" stroke="#454545" stroke-width="1"/>
<polyline points="364.5,645.5 390.5,645.5" fill="none" stroke="#454545" stroke-width="1"/>
<polygon points="385.0,642.7 390.5,645.5 385.0,648.3" fill="#000"/>
<polyline points="364.5,652.5 364.5,645.5" fill="none" stroke="#454545" stroke-width="1"/>
<circle cx="364.5" cy="624.5" r="2" fill="#000"/>
<circle cx="364.5" cy="652.5" r="2" fill="#000"/>
<rect x="390" y="625" width="5" height="27" fill="#000"/>
<rect x="395" y="626" width="1" height="27" fill="#9a9a9a"/>
<polyline points="395.5,638.5 419.5,638.5" fill="none" stroke="#454545" stroke-width="1"/>
<polygon points="414.0,635.7 419.5,638.5 414.0,641.3" fill="#000"/>
<polygon points="419.5,627.5 441.5,638.5 419.5,649.5" fill="#fff" stroke="#383838"/>
<text x="421" y="641" font-size="6.3" text-anchor="start" fill="#1e1e1e" font-weight="normal" >K*u</text>
<text x="429" y="658" font-size="6.8" text-anchor="middle" fill="#555" font-weight="normal" >[0.5 0.5; 1 -1]</text>
<polyline points="441.5,638.5 461.5,638.5" fill="none" stroke="#454545" stroke-width="1"/>
<polygon points="456.0,635.7 461.5,638.5 456.0,641.3" fill="#000"/>
<rect x="461" y="623" width="5" height="30" fill="#000"/>
<rect x="466" y="624" width="1" height="30" fill="#9a9a9a"/>
<polyline points="466.5,631.5 472.5,631.5" fill="none" stroke="#454545" stroke-width="1"/>
<polyline points="472.5,631.5 472.5,620.5 487.5,620.5" fill="none" stroke="#454545" stroke-width="1"/>
<polygon points="482.0,617.7 487.5,620.5 482.0,623.3" fill="#000"/>
<rect x="487.5" y="615.5" width="10" height="10" fill="#fff" stroke="#858585" stroke-width="1"/>
<rect x="487" y="622" width="11" height="4" fill="#f00"/>
<rect x="487" y="625" width="11" height="1" fill="#600"/>
<rect x="487" y="615" width="1" height="11" fill="#777" fill-opacity="0.6"/>
<rect x="497" y="615" width="1" height="11" fill="#555" fill-opacity="0.7"/>
<text x="499" y="622.6" font-size="7.5" text-anchor="start" fill="#333" font-weight="normal" >Ib_B</text>
<polyline points="466.5,645.5 487.5,645.5" fill="none" stroke="#454545" stroke-width="1"/>
<polygon points="482.0,642.7 487.5,645.5 482.0,648.3" fill="#000"/>
<rect x="487.5" y="639.5" width="10" height="10" fill="#fff" stroke="#858585" stroke-width="1"/>
<rect x="487" y="646" width="11" height="4" fill="#f00"/>
<rect x="487" y="649" width="11" height="1" fill="#600"/>
<rect x="487" y="639" width="1" height="11" fill="#777" fill-opacity="0.6"/>
<rect x="497" y="639" width="1" height="11" fill="#555" fill-opacity="0.7"/>
<text x="499" y="646.6" font-size="7.5" text-anchor="start" fill="#333" font-weight="normal" >Ig_B</text>
<polyline points="472.5,631.5 533.5,631.5" fill="none" stroke="#454545" stroke-width="1"/>
<polygon points="528.0,628.7 533.5,631.5 528.0,634.3" fill="#000"/>
<rect x="274.5" y="688.5" width="78" height="57" fill="none" stroke="#b8b8b8" stroke-width="1"/>
<rect x="273.5" y="687.5" width="78" height="57" fill="#fff" stroke="#383838" stroke-width="1"/>
<text x="274.5" y="704.5" font-size="6" text-anchor="start" fill="#222" font-weight="normal" >sim</text>
<text x="275" y="733.5" font-size="5.5" text-anchor="start" fill="#222" font-weight="normal" >&gt;</text>
<text x="310" y="702" font-size="7.3" text-anchor="middle" fill="#1e1e1e" font-weight="normal" >I_C</text>
<text x="348" y="704.5" font-size="6.2" text-anchor="end" fill="#1e1e1e" font-weight="normal" >Iup_C</text>
<text x="348" y="733.5" font-size="6.2" text-anchor="end" fill="#1e1e1e" font-weight="normal" >Ilow_C</text>
<text x="348" y="741" font-size="7.5" text-anchor="end" fill="#1e1e1e" font-weight="normal" >ADC</text>
<circle cx="262.5" cy="731.5" r="2" fill="#000"/>
<polyline points="262.5,731.5 273.5,731.5" fill="none" stroke="#454545" stroke-width="1"/>
<polygon points="268.0,728.7 273.5,731.5 268.0,734.3" fill="#000"/>
<polyline points="351.5,702.5 364.5,702.5" fill="none" stroke="#454545" stroke-width="1"/>
<polyline points="351.5,731.5 364.5,731.5" fill="none" stroke="#454545" stroke-width="1"/>
<polyline points="364.5,702.5 364.5,691.5 380.5,691.5" fill="none" stroke="#454545" stroke-width="1"/>
<polygon points="375.0,688.7 380.5,691.5 375.0,694.3" fill="#000"/>
<rect x="380.5" y="686.5" width="10" height="10" fill="#fff" stroke="#858585" stroke-width="1"/>
<rect x="380" y="693" width="11" height="4" fill="#f00"/>
<rect x="380" y="696" width="11" height="1" fill="#600"/>
<rect x="380" y="686" width="1" height="11" fill="#777" fill-opacity="0.6"/>
<rect x="390" y="686" width="1" height="11" fill="#555" fill-opacity="0.7"/>
<text x="392" y="693.6" font-size="7.5" text-anchor="start" fill="#333" font-weight="normal" >Iup_C</text>
<polyline points="364.5,731.5 364.5,741.5 380.5,741.5" fill="none" stroke="#454545" stroke-width="1"/>
<polygon points="375.0,738.7 380.5,741.5 375.0,744.3" fill="#000"/>
<rect x="380.5" y="736.5" width="10" height="10" fill="#fff" stroke="#858585" stroke-width="1"/>
<rect x="380" y="743" width="11" height="4" fill="#f00"/>
<rect x="380" y="746" width="11" height="1" fill="#600"/>
<rect x="380" y="736" width="1" height="11" fill="#777" fill-opacity="0.6"/>
<rect x="390" y="736" width="1" height="11" fill="#555" fill-opacity="0.7"/>
<text x="392" y="743.6" font-size="7.5" text-anchor="start" fill="#333" font-weight="normal" >Ilow_C</text>
<polyline points="364.5,709.5 390.5,709.5" fill="none" stroke="#454545" stroke-width="1"/>
<polygon points="385.0,706.7 390.5,709.5 385.0,712.3" fill="#000"/>
<polyline points="364.5,702.5 364.5,709.5" fill="none" stroke="#454545" stroke-width="1"/>
<polyline points="364.5,723.5 390.5,723.5" fill="none" stroke="#454545" stroke-width="1"/>
<polygon points="385.0,720.7 390.5,723.5 385.0,726.3" fill="#000"/>
<polyline points="364.5,731.5 364.5,723.5" fill="none" stroke="#454545" stroke-width="1"/>
<circle cx="364.5" cy="702.5" r="2" fill="#000"/>
<circle cx="364.5" cy="731.5" r="2" fill="#000"/>
<rect x="390" y="703" width="5" height="28" fill="#000"/>
<rect x="395" y="704" width="1" height="28" fill="#9a9a9a"/>
<polyline points="395.5,716.5 419.5,716.5" fill="none" stroke="#454545" stroke-width="1"/>
<polygon points="414.0,713.7 419.5,716.5 414.0,719.3" fill="#000"/>
<polygon points="419.5,705.5 441.5,716.5 419.5,727.5" fill="#fff" stroke="#383838"/>
<text x="421" y="719" font-size="6.3" text-anchor="start" fill="#1e1e1e" font-weight="normal" >K*u</text>
<text x="429" y="736" font-size="6.8" text-anchor="middle" fill="#555" font-weight="normal" >[0.5 0.5; 1 -1]</text>
<polyline points="441.5,716.5 461.5,716.5" fill="none" stroke="#454545" stroke-width="1"/>
<polygon points="456.0,713.7 461.5,716.5 456.0,719.3" fill="#000"/>
<rect x="461" y="701" width="5" height="31" fill="#000"/>
<rect x="466" y="702" width="1" height="31" fill="#9a9a9a"/>
<polyline points="466.5,709.5 472.5,709.5" fill="none" stroke="#454545" stroke-width="1"/>
<polyline points="472.5,709.5 472.5,698.5 487.5,698.5" fill="none" stroke="#454545" stroke-width="1"/>
<polygon points="482.0,695.7 487.5,698.5 482.0,701.3" fill="#000"/>
<rect x="487.5" y="693.5" width="10" height="10" fill="#fff" stroke="#858585" stroke-width="1"/>
<rect x="487" y="700" width="11" height="4" fill="#f00"/>
<rect x="487" y="703" width="11" height="1" fill="#600"/>
<rect x="487" y="693" width="1" height="11" fill="#777" fill-opacity="0.6"/>
<rect x="497" y="693" width="1" height="11" fill="#555" fill-opacity="0.7"/>
<text x="499" y="700.6" font-size="7.5" text-anchor="start" fill="#333" font-weight="normal" >Ib_C</text>
<polyline points="466.5,723.5 487.5,723.5" fill="none" stroke="#454545" stroke-width="1"/>
<polygon points="482.0,720.7 487.5,723.5 482.0,726.3" fill="#000"/>
<rect x="487.5" y="717.5" width="10" height="10" fill="#fff" stroke="#858585" stroke-width="1"/>
<rect x="487" y="724" width="11" height="4" fill="#f00"/>
<rect x="487" y="727" width="11" height="1" fill="#600"/>
<rect x="487" y="717" width="1" height="11" fill="#777" fill-opacity="0.6"/>
<rect x="497" y="717" width="1" height="11" fill="#555" fill-opacity="0.7"/>
<text x="499" y="724.6" font-size="7.5" text-anchor="start" fill="#333" font-weight="normal" >Ig_C</text>
<polyline points="472.5,709.5 522.5,709.5 522.5,648.5 533.5,648.5" fill="none" stroke="#454545" stroke-width="1"/>
<polygon points="528.0,645.7 533.5,648.5 528.0,651.3" fill="#000"/>
<circle cx="472.5" cy="552.5" r="1.9" fill="#000"/>
<circle cx="472.5" cy="631.5" r="1.9" fill="#000"/>
<circle cx="472.5" cy="709.5" r="1.9" fill="#000"/>
<rect x="534.5" y="604.5" width="21" height="55" fill="none" stroke="#b8b8b8" stroke-width="1"/>
<rect x="533.5" y="603.5" width="21" height="55" fill="#fff" stroke="#383838" stroke-width="1"/>
<rect x="533" y="604" width="1" height="54" fill="#a8a8a8"/>
<text x="534.5" y="616" font-size="6.5" text-anchor="start" fill="#000" font-weight="bold" >+</text>
<text x="534.5" y="634" font-size="6.5" text-anchor="start" fill="#000" font-weight="bold" >+</text>
<text x="534.5" y="651" font-size="6.5" text-anchor="start" fill="#000" font-weight="bold" >+</text>
<polyline points="554.5,630.5 576.5,630.5" fill="none" stroke="#454545" stroke-width="1"/>
<polygon points="571.0,627.7 576.5,630.5 571.0,633.3" fill="#000"/>
<rect x="576.5" y="625.5" width="10" height="10" fill="#fff" stroke="#858585" stroke-width="1"/>
<rect x="576" y="632" width="11" height="4" fill="#f00"/>
<rect x="576" y="635" width="11" height="1" fill="#600"/>
<rect x="576" y="625" width="1" height="11" fill="#777" fill-opacity="0.6"/>
<rect x="586" y="625" width="1" height="11" fill="#555" fill-opacity="0.7"/>
<text x="588" y="632.6" font-size="7.5" text-anchor="start" fill="#333" font-weight="normal" >Idc</text>
<rect x="274.5" y="781.5" width="78" height="57" fill="none" stroke="#b8b8b8" stroke-width="1"/>
<rect x="273.5" y="780.5" width="78" height="57" fill="#fff" stroke="#383838" stroke-width="1"/>
<text x="274.5" y="797.5" font-size="6" text-anchor="start" fill="#222" font-weight="normal" >sim</text>
<text x="275" y="826" font-size="5.5" text-anchor="start" fill="#222" font-weight="normal" >&gt;</text>
<text x="310" y="796" font-size="7.5" text-anchor="middle" fill="#1e1e1e" font-weight="normal" >Vg</text>
<text x="347" y="811" font-size="6.2" text-anchor="end" fill="#1e1e1e" font-weight="normal" >Vg_ABC</text>
<text x="348" y="834" font-size="7.5" text-anchor="end" fill="#1e1e1e" font-weight="normal" >ADC</text>
<polyline points="351.5,808.5 365.5,808.5" fill="none" stroke="#454545" stroke-width="1"/>
<polygon points="360.0,805.7 365.5,808.5 360.0,811.3" fill="#000"/>
<rect x="365" y="784" width="5" height="49" fill="#000"/>
<rect x="370" y="785" width="1" height="49" fill="#9a9a9a"/>
<polyline points="370.5,794.5 387.5,794.5" fill="none" stroke="#454545" stroke-width="1"/>
<polygon points="382.0,791.7 387.5,794.5 382.0,797.3" fill="#000"/>
<rect x="387.5" y="789.5" width="10" height="10" fill="#fff" stroke="#858585" stroke-width="1"/>
<rect x="387" y="796" width="11" height="4" fill="#f00"/>
<rect x="387" y="799" width="11" height="1" fill="#600"/>
<rect x="387" y="789" width="1" height="11" fill="#777" fill-opacity="0.6"/>
<rect x="397" y="789" width="1" height="11" fill="#555" fill-opacity="0.7"/>
<text x="399" y="796.6" font-size="7.5" text-anchor="start" fill="#333" font-weight="normal" >Vg_A</text>
<polyline points="370.5,808.5 387.5,808.5" fill="none" stroke="#454545" stroke-width="1"/>
<polygon points="382.0,805.7 387.5,808.5 382.0,811.3" fill="#000"/>
<rect x="387.5" y="803.5" width="10" height="10" fill="#fff" stroke="#858585" stroke-width="1"/>
<rect x="387" y="810" width="11" height="4" fill="#f00"/>
<rect x="387" y="813" width="11" height="1" fill="#600"/>
<rect x="387" y="803" width="1" height="11" fill="#777" fill-opacity="0.6"/>
<rect x="397" y="803" width="1" height="11" fill="#555" fill-opacity="0.7"/>
<text x="399" y="810.6" font-size="7.5" text-anchor="start" fill="#333" font-weight="normal" >Vg_B</text>
<polyline points="370.5,823.5 387.5,823.5" fill="none" stroke="#454545" stroke-width="1"/>
<polygon points="382.0,820.7 387.5,823.5 382.0,826.3" fill="#000"/>
<rect x="387.5" y="818.5" width="10" height="10" fill="#fff" stroke="#858585" stroke-width="1"/>
<rect x="387" y="825" width="11" height="4" fill="#f00"/>
<rect x="387" y="828" width="11" height="1" fill="#600"/>
<rect x="387" y="818" width="1" height="11" fill="#777" fill-opacity="0.6"/>
<rect x="397" y="818" width="1" height="11" fill="#555" fill-opacity="0.7"/>
<text x="399" y="825.6" font-size="7.5" text-anchor="start" fill="#333" font-weight="normal" >Vg_C</text>
<rect x="633.5" y="226.5" width="29" height="27" fill="none" stroke="#b8b8b8" stroke-width="1"/>
<rect x="632.5" y="225.5" width="29" height="27" fill="#fff" stroke="#383838" stroke-width="1"/>
<rect x="635" y="229" width="4" height="4" fill="#000"/>
<rect x="635.5" y="237.5" width="3" height="3" fill="#fff" stroke="#000" stroke-width="1"/>
<rect x="635.5" y="245.5" width="3" height="3" fill="#fff" stroke="#000" stroke-width="1"/>
<rect x="655" y="237" width="4" height="4" fill="#000"/>
<line x1="639" y1="231" x2="655" y2="239" stroke="#000" stroke-width="0.9"/>
<polyline points="661.5,239.5 689.5,239.5" fill="none" stroke="#454545" stroke-width="1"/>
<polygon points="684.0,236.7 689.5,239.5 684.0,242.3" fill="#000"/>
<polygon points="646.5,255.5 665.5,255.5 672.5,260.5 665.5,265.5 646.5,265.5" fill="#fff" stroke="#000" stroke-width="1"/>
<text x="656.5" y="262.3" font-size="7.5" text-anchor="middle" fill="#1e1e1e" font-weight="normal" >[Vdc]</text>
<polyline points="672.5,260.5 689.5,260.5" fill="none" stroke="#454545" stroke-width="1"/>
<polygon points="684.0,257.7 689.5,260.5 684.0,263.3" fill="#000"/>
<rect x="690.5" y="229.5" width="57" height="43" fill="none" stroke="#b8b8b8" stroke-width="1"/>
<rect x="689.5" y="228.5" width="57" height="43" fill="url(#g1)" stroke="#383838" stroke-width="1"/>
<text x="691" y="241.5" font-size="6.2" text-anchor="start" fill="#1e1e1e" font-weight="normal" >Ea_ref</text>
<text x="691" y="262.5" font-size="6.2" text-anchor="start" fill="#1e1e1e" font-weight="normal" >Vdc</text>
<text x="744" y="251.5" font-size="6.2" text-anchor="end" fill="#1e1e1e" font-weight="normal" >m_A</text>
<text x="717.5" y="280" font-size="7" text-anchor="middle" fill="#333" font-weight="normal" >Modulation A</text>
<polyline points="746.5,250.5 778.5,250.5" fill="none" stroke="#454545" stroke-width="1"/>
<polygon points="773.0,247.7 778.5,250.5 773.0,253.3" fill="#000"/>
<circle cx="762.5" cy="250.5" r="2" fill="#000"/>
<polyline points="762.5,250.5 762.5,349.5 778.5,349.5" fill="none" stroke="#454545" stroke-width="1"/>
<polygon points="773.0,346.7 778.5,349.5 773.0,352.3" fill="#000"/>
<rect x="633.5" y="425.5" width="29" height="27" fill="none" stroke="#b8b8b8" stroke-width="1"/>
<rect x="632.5" y="424.5" width="29" height="27" fill="#fff" stroke="#383838" stroke-width="1"/>
<rect x="635.5" y="428.5" width="3" height="3" fill="#fff" stroke="#000" stroke-width="1"/>
<rect x="635" y="436" width="4" height="4" fill="#000"/>
<rect x="635.5" y="444.5" width="3" height="3" fill="#fff" stroke="#000" stroke-width="1"/>
<rect x="655" y="436" width="4" height="4" fill="#000"/>
<line x1="639" y1="438" x2="655" y2="438" stroke="#000" stroke-width="0.9"/>
<polyline points="661.5,439.5 689.5,439.5" fill="none" stroke="#454545" stroke-width="1"/>
<polygon points="684.0,436.7 689.5,439.5 684.0,442.3" fill="#000"/>
<polygon points="646.5,454.5 665.5,454.5 672.5,459.5 665.5,464.5 646.5,464.5" fill="#fff" stroke="#000" stroke-width="1"/>
<text x="656.5" y="461.3" font-size="7.5" text-anchor="middle" fill="#1e1e1e" font-weight="normal" >[Vdc]</text>
<polyline points="672.5,459.5 689.5,459.5" fill="none" stroke="#454545" stroke-width="1"/>
<polygon points="684.0,456.7 689.5,459.5 684.0,462.3" fill="#000"/>
<rect x="690.5" y="428.5" width="57" height="43" fill="none" stroke="#b8b8b8" stroke-width="1"/>
<rect x="689.5" y="427.5" width="57" height="43" fill="url(#g1)" stroke="#383838" stroke-width="1"/>
<text x="691" y="440.5" font-size="6.2" text-anchor="start" fill="#1e1e1e" font-weight="normal" >Eb_ref</text>
<text x="691" y="461.5" font-size="6.2" text-anchor="start" fill="#1e1e1e" font-weight="normal" >Vdc</text>
<text x="744" y="450.5" font-size="6.2" text-anchor="end" fill="#1e1e1e" font-weight="normal" >m_B</text>
<text x="717.5" y="479" font-size="7" text-anchor="middle" fill="#333" font-weight="normal" >Modulation B</text>
<polyline points="746.5,449.5 778.5,449.5" fill="none" stroke="#454545" stroke-width="1"/>
<polygon points="773.0,446.7 778.5,449.5 773.0,452.3" fill="#000"/>
<circle cx="762.5" cy="449.5" r="2" fill="#000"/>
<polyline points="762.5,449.5 762.5,548.5 778.5,548.5" fill="none" stroke="#454545" stroke-width="1"/>
<polygon points="773.0,545.7 778.5,548.5 773.0,551.3" fill="#000"/>
<rect x="633.5" y="625.5" width="29" height="27" fill="none" stroke="#b8b8b8" stroke-width="1"/>
<rect x="632.5" y="624.5" width="29" height="27" fill="#fff" stroke="#383838" stroke-width="1"/>
<rect x="635.5" y="628.5" width="3" height="3" fill="#fff" stroke="#000" stroke-width="1"/>
<rect x="635.5" y="636.5" width="3" height="3" fill="#fff" stroke="#000" stroke-width="1"/>
<rect x="635" y="644" width="4" height="4" fill="#000"/>
<rect x="655" y="636" width="4" height="4" fill="#000"/>
<line x1="639" y1="646" x2="655" y2="638" stroke="#000" stroke-width="0.9"/>
<polyline points="661.5,638.5 689.5,638.5" fill="none" stroke="#454545" stroke-width="1"/>
<polygon points="684.0,635.7 689.5,638.5 684.0,641.3" fill="#000"/>
<polygon points="646.5,654.5 665.5,654.5 672.5,659.5 665.5,664.5 646.5,664.5" fill="#fff" stroke="#000" stroke-width="1"/>
<text x="656.5" y="661.3" font-size="7.5" text-anchor="middle" fill="#1e1e1e" font-weight="normal" >[Vdc]</text>
<polyline points="672.5,659.5 689.5,659.5" fill="none" stroke="#454545" stroke-width="1"/>
<polygon points="684.0,656.7 689.5,659.5 684.0,662.3" fill="#000"/>
<rect x="690.5" y="628.5" width="57" height="43" fill="none" stroke="#b8b8b8" stroke-width="1"/>
<rect x="689.5" y="627.5" width="57" height="43" fill="url(#g1)" stroke="#383838" stroke-width="1"/>
<text x="691" y="640.5" font-size="6.2" text-anchor="start" fill="#1e1e1e" font-weight="normal" >Ec_ref</text>
<text x="691" y="661.5" font-size="6.2" text-anchor="start" fill="#1e1e1e" font-weight="normal" >Vdc</text>
<text x="744" y="650.5" font-size="6.2" text-anchor="end" fill="#1e1e1e" font-weight="normal" >m_C</text>
<text x="717.5" y="679" font-size="7" text-anchor="middle" fill="#333" font-weight="normal" >Modulation B1</text>
<polyline points="746.5,649.5 778.5,649.5" fill="none" stroke="#454545" stroke-width="1"/>
<polygon points="773.0,646.7 778.5,649.5 773.0,652.3" fill="#000"/>
<circle cx="762.5" cy="649.5" r="2" fill="#000"/>
<polyline points="762.5,649.5 762.5,748.5 778.5,748.5" fill="none" stroke="#454545" stroke-width="1"/>
<polygon points="773.0,745.7 778.5,748.5 773.0,751.3" fill="#000"/>
<rect x="779.5" y="237.5" width="29" height="27" fill="none" stroke="#b8b8b8" stroke-width="1"/>
<rect x="778.5" y="236.5" width="29" height="27" fill="#fff" stroke="#383838" stroke-width="1"/>
<rect x="781" y="242" width="4" height="6" fill="#000"/>
<rect x="781.5" y="251.5" width="3" height="5" fill="#fff" stroke="#000" stroke-width="1"/>
<rect x="801" y="247" width="4" height="6" fill="#000"/>
<line x1="785" y1="245" x2="801" y2="250" stroke="#000" stroke-width="0.9"/>
<polyline points="807.5,250.5 892.5,250.5" fill="none" stroke="#454545" stroke-width="1"/>
<polygon points="887.0,247.7 892.5,250.5 887.0,253.3" fill="#000"/>
<polygon points="778.5,274.5 807.5,274.5 814.5,282.0 807.5,289.5 778.5,289.5" fill="#fff" stroke="#000" stroke-width="1"/>
<text x="793.5" y="283.8" font-size="7.5" text-anchor="middle" fill="#1e1e1e" font-weight="normal" >[simdata]</text>
<polyline points="814.5,282.5 824.5,282.5" fill="none" stroke="#a4a4a4" stroke-width="4.4" stroke-linejoin="round"/>
<polyline points="814.5,282.5 824.5,282.5" fill="none" stroke="#444" stroke-width="1"/>
<polygon points="820.0,279.7 825.5,282.5 820.0,285.3" fill="#000"/>
<rect x="825" y="261" width="4" height="42" fill="#000"/>
<rect x="829" y="262" width="1" height="42" fill="#9a9a9a"/>
<rect x="826" y="279" width="2" height="2" fill="#fff"/>
<rect x="826" y="283" width="2" height="2" fill="#fff"/>
<polyline points="829.5,271.5 892.5,271.5" fill="none" stroke="#454545" stroke-width="1"/>
<polygon points="887.0,268.7 892.5,271.5 887.0,274.3" fill="#000"/>
<polyline points="829.5,292.5 892.5,292.5" fill="none" stroke="#454545" stroke-width="1"/>
<polygon points="887.0,289.7 892.5,292.5 887.0,295.3" fill="#000"/>
<text x="832" y="279" font-size="5.8" text-anchor="start" fill="#222" font-weight="normal" textLength="39.5" lengthAdjust="spacing">&lt;Vsm_up_A&gt;</text>
<text x="832" y="300" font-size="5.8" text-anchor="start" fill="#222" font-weight="normal" textLength="24" lengthAdjust="spacing">&lt;Iup_A&gt;</text>
<rect x="893.5" y="234.5" width="75" height="93" fill="none" stroke="#b8b8b8" stroke-width="1"/>
<rect x="892.5" y="233.5" width="75" height="93" fill="#fff" stroke="#383838" stroke-width="1"/>
<rect x="893" y="307" width="74" height="19" fill="#f00"/>
<text x="929" y="243" font-size="7" text-anchor="middle" fill="#1e1e1e" font-weight="normal" >BB0</text>
<text x="894" y="251.7" font-size="7.2" text-anchor="start" fill="#1a1a1a" font-weight="normal" >m (from 0 to 4)</text>
<text x="894" y="273.2" font-size="7.2" text-anchor="start" fill="#1a1a1a" font-weight="normal" >sim V (CH: 0,1,2,3)</text>
<text x="894" y="294.3" font-size="7.2" text-anchor="start" fill="#1a1a1a" font-weight="normal" >sim I (CH: 12)</text>
<text x="894" y="316" font-size="6.5" text-anchor="start" fill="#000" font-weight="normal" >&gt;</text>
<text x="929" y="318" font-size="7.5" text-anchor="middle" fill="#fff" font-weight="normal" >SS</text>
<text x="929" y="324" font-size="7.5" text-anchor="middle" fill="#fff" font-weight="normal" >PWM</text>
<circle cx="878.5" cy="314.5" r="2" fill="#000"/>
<polyline points="878.5,314.5 892.5,314.5" fill="none" stroke="#454545" stroke-width="1"/>
<polygon points="887.0,311.7 892.5,314.5 887.0,317.3" fill="#000"/>
<polyline points="967.5,243.5 991.5,243.5" fill="none" stroke="#454545" stroke-width="1"/>
<polygon points="986.0,240.7 991.5,243.5 986.0,246.3" fill="#000"/>
<text x="965" y="245.3" font-size="7" text-anchor="end" fill="#1a1a1a" font-weight="normal" >0H</text>
<polyline points="967.5,253.5 991.5,253.5" fill="none" stroke="#454545" stroke-width="1"/>
<polygon points="986.0,250.7 991.5,253.5 986.0,256.3" fill="#000"/>
<text x="965" y="255.3" font-size="7" text-anchor="end" fill="#1a1a1a" font-weight="normal" >0L</text>
<polyline points="967.5,264.5 991.5,264.5" fill="none" stroke="#454545" stroke-width="1"/>
<polygon points="986.0,261.7 991.5,264.5 986.0,267.3" fill="#000"/>
<text x="965" y="266.3" font-size="7" text-anchor="end" fill="#1a1a1a" font-weight="normal" >1H</text>
<polyline points="967.5,275.5 991.5,275.5" fill="none" stroke="#454545" stroke-width="1"/>
<polygon points="986.0,272.7 991.5,275.5 986.0,278.3" fill="#000"/>
<text x="965" y="277.3" font-size="7" text-anchor="end" fill="#1a1a1a" font-weight="normal" >1L</text>
<polyline points="967.5,285.5 991.5,285.5" fill="none" stroke="#454545" stroke-width="1"/>
<polygon points="986.0,282.7 991.5,285.5 986.0,288.3" fill="#000"/>
<text x="965" y="287.3" font-size="7" text-anchor="end" fill="#1a1a1a" font-weight="normal" >2H</text>
<polyline points="967.5,296.5 991.5,296.5" fill="none" stroke="#454545" stroke-width="1"/>
<polygon points="986.0,293.7 991.5,296.5 986.0,299.3" fill="#000"/>
<text x="965" y="298.3" font-size="7" text-anchor="end" fill="#1a1a1a" font-weight="normal" >2L</text>
<polyline points="967.5,306.5 991.5,306.5" fill="none" stroke="#454545" stroke-width="1"/>
<polygon points="986.0,303.7 991.5,306.5 986.0,309.3" fill="#000"/>
<text x="965" y="308.3" font-size="7" text-anchor="end" fill="#000" font-weight="normal" >3H</text>
<polyline points="967.5,317.5 991.5,317.5" fill="none" stroke="#454545" stroke-width="1"/>
<polygon points="986.0,314.7 991.5,317.5 986.0,320.3" fill="#000"/>
<text x="965" y="319.3" font-size="7" text-anchor="end" fill="#000" font-weight="normal" >3L</text>
<rect x="992" y="234" width="4" height="92" fill="#000"/>
<rect x="996" y="235" width="1" height="92" fill="#9a9a9a"/>
<polyline points="996.5,282.5 1023.5,282.5" fill="none" stroke="#454545" stroke-width="1"/>
<polygon points="1018.0,279.7 1023.5,282.5 1018.0,285.3" fill="#000"/>
<rect x="779.5" y="337.5" width="29" height="27" fill="none" stroke="#b8b8b8" stroke-width="1"/>
<rect x="778.5" y="336.5" width="29" height="27" fill="#fff" stroke="#383838" stroke-width="1"/>
<rect x="781.5" y="342.5" width="3" height="5" fill="#fff" stroke="#000" stroke-width="1"/>
<rect x="781" y="351" width="4" height="6" fill="#000"/>
<rect x="801" y="347" width="4" height="6" fill="#000"/>
<line x1="785" y1="354" x2="801" y2="350" stroke="#000" stroke-width="0.9"/>
<polyline points="807.5,350.5 892.5,350.5" fill="none" stroke="#454545" stroke-width="1"/>
<polygon points="887.0,347.7 892.5,350.5 887.0,353.3" fill="#000"/>
<polygon points="778.5,374.5 807.5,374.5 814.5,382.0 807.5,389.5 778.5,389.5" fill="#fff" stroke="#000" stroke-width="1"/>
<text x="793.5" y="383.8" font-size="7.5" text-anchor="middle" fill="#1e1e1e" font-weight="normal" >[simdata]</text>
<polyline points="814.5,382.5 824.5,382.5" fill="none" stroke="#a4a4a4" stroke-width="4.4" stroke-linejoin="round"/>
<polyline points="814.5,382.5 824.5,382.5" fill="none" stroke="#444" stroke-width="1"/>
<polygon points="820.0,379.7 825.5,382.5 820.0,385.3" fill="#000"/>
<rect x="825" y="361" width="4" height="42" fill="#000"/>
<rect x="829" y="362" width="1" height="42" fill="#9a9a9a"/>
<rect x="826" y="379" width="2" height="2" fill="#fff"/>
<rect x="826" y="383" width="2" height="2" fill="#fff"/>
<polyline points="829.5,371.5 892.5,371.5" fill="none" stroke="#454545" stroke-width="1"/>
<polygon points="887.0,368.7 892.5,371.5 887.0,374.3" fill="#000"/>
<polyline points="829.5,392.5 892.5,392.5" fill="none" stroke="#454545" stroke-width="1"/>
<polygon points="887.0,389.7 892.5,392.5 887.0,395.3" fill="#000"/>
<text x="832" y="379" font-size="5.8" text-anchor="start" fill="#222" font-weight="normal" textLength="41.5" lengthAdjust="spacing">&lt;Vsm_low_A&gt;</text>
<text x="832" y="400" font-size="5.8" text-anchor="start" fill="#222" font-weight="normal" textLength="26" lengthAdjust="spacing">&lt;Ilow_A&gt;</text>
<rect x="893.5" y="334.5" width="75" height="93" fill="none" stroke="#b8b8b8" stroke-width="1"/>
<rect x="892.5" y="333.5" width="75" height="93" fill="#fff" stroke="#383838" stroke-width="1"/>
<rect x="893" y="407" width="74" height="19" fill="#f00"/>
<text x="929" y="343" font-size="7" text-anchor="middle" fill="#1e1e1e" font-weight="normal" >BB0</text>
<text x="894" y="351.7" font-size="7.2" text-anchor="start" fill="#1a1a1a" font-weight="normal" >m (from 0 to 4)</text>
<text x="894" y="373.2" font-size="7.2" text-anchor="start" fill="#1a1a1a" font-weight="normal" >sim V (CH: 4,5,6,7)</text>
<text x="894" y="394.3" font-size="7.2" text-anchor="start" fill="#1a1a1a" font-weight="normal" >sim I (CH: 13)</text>
<text x="894" y="416" font-size="6.5" text-anchor="start" fill="#000" font-weight="normal" >&gt;</text>
<text x="929" y="418" font-size="7.5" text-anchor="middle" fill="#fff" font-weight="normal" >SS</text>
<text x="929" y="424" font-size="7.5" text-anchor="middle" fill="#fff" font-weight="normal" >PWM</text>
<circle cx="878.5" cy="414.5" r="2" fill="#000"/>
<polyline points="878.5,414.5 892.5,414.5" fill="none" stroke="#454545" stroke-width="1"/>
<polygon points="887.0,411.7 892.5,414.5 887.0,417.3" fill="#000"/>
<polyline points="967.5,343.5 991.5,343.5" fill="none" stroke="#454545" stroke-width="1"/>
<polygon points="986.0,340.7 991.5,343.5 986.0,346.3" fill="#000"/>
<text x="965" y="345.3" font-size="7" text-anchor="end" fill="#1a1a1a" font-weight="normal" >4H</text>
<polyline points="967.5,353.5 991.5,353.5" fill="none" stroke="#454545" stroke-width="1"/>
<polygon points="986.0,350.7 991.5,353.5 986.0,356.3" fill="#000"/>
<text x="965" y="355.3" font-size="7" text-anchor="end" fill="#1a1a1a" font-weight="normal" >4L</text>
<polyline points="967.5,364.5 991.5,364.5" fill="none" stroke="#454545" stroke-width="1"/>
<polygon points="986.0,361.7 991.5,364.5 986.0,367.3" fill="#000"/>
<text x="965" y="366.3" font-size="7" text-anchor="end" fill="#1a1a1a" font-weight="normal" >5H</text>
<polyline points="967.5,375.5 991.5,375.5" fill="none" stroke="#454545" stroke-width="1"/>
<polygon points="986.0,372.7 991.5,375.5 986.0,378.3" fill="#000"/>
<text x="965" y="377.3" font-size="7" text-anchor="end" fill="#1a1a1a" font-weight="normal" >5L</text>
<polyline points="967.5,385.5 991.5,385.5" fill="none" stroke="#454545" stroke-width="1"/>
<polygon points="986.0,382.7 991.5,385.5 986.0,388.3" fill="#000"/>
<text x="965" y="387.3" font-size="7" text-anchor="end" fill="#1a1a1a" font-weight="normal" >6H</text>
<polyline points="967.5,396.5 991.5,396.5" fill="none" stroke="#454545" stroke-width="1"/>
<polygon points="986.0,393.7 991.5,396.5 986.0,399.3" fill="#000"/>
<text x="965" y="398.3" font-size="7" text-anchor="end" fill="#1a1a1a" font-weight="normal" >6L</text>
<polyline points="967.5,406.5 991.5,406.5" fill="none" stroke="#454545" stroke-width="1"/>
<polygon points="986.0,403.7 991.5,406.5 986.0,409.3" fill="#000"/>
<text x="965" y="408.3" font-size="7" text-anchor="end" fill="#000" font-weight="normal" >7H</text>
<polyline points="967.5,417.5 991.5,417.5" fill="none" stroke="#454545" stroke-width="1"/>
<polygon points="986.0,414.7 991.5,417.5 986.0,420.3" fill="#000"/>
<text x="965" y="419.3" font-size="7" text-anchor="end" fill="#000" font-weight="normal" >7L</text>
<rect x="992" y="334" width="4" height="92" fill="#000"/>
<rect x="996" y="335" width="1" height="92" fill="#9a9a9a"/>
<polyline points="996.5,382.5 1023.5,382.5" fill="none" stroke="#454545" stroke-width="1"/>
<polygon points="1018.0,379.7 1023.5,382.5 1018.0,385.3" fill="#000"/>
<rect x="779.5" y="436.5" width="29" height="27" fill="none" stroke="#b8b8b8" stroke-width="1"/>
<rect x="778.5" y="435.5" width="29" height="27" fill="#fff" stroke="#383838" stroke-width="1"/>
<rect x="781" y="441" width="4" height="6" fill="#000"/>
<rect x="781.5" y="450.5" width="3" height="5" fill="#fff" stroke="#000" stroke-width="1"/>
<rect x="801" y="446" width="4" height="6" fill="#000"/>
<line x1="785" y1="444" x2="801" y2="449" stroke="#000" stroke-width="0.9"/>
<polyline points="807.5,449.5 892.5,449.5" fill="none" stroke="#454545" stroke-width="1"/>
<polygon points="887.0,446.7 892.5,449.5 887.0,452.3" fill="#000"/>
<polygon points="778.5,473.5 807.5,473.5 814.5,481.0 807.5,488.5 778.5,488.5" fill="#fff" stroke="#000" stroke-width="1"/>
<text x="793.5" y="482.8" font-size="7.5" text-anchor="middle" fill="#1e1e1e" font-weight="normal" >[simdata]</text>
<polyline points="814.5,481.5 824.5,481.5" fill="none" stroke="#a4a4a4" stroke-width="4.4" stroke-linejoin="round"/>
<polyline points="814.5,481.5 824.5,481.5" fill="none" stroke="#444" stroke-width="1"/>
<polygon points="820.0,478.7 825.5,481.5 820.0,484.3" fill="#000"/>
<rect x="825" y="460" width="4" height="42" fill="#000"/>
<rect x="829" y="461" width="1" height="42" fill="#9a9a9a"/>
<rect x="826" y="478" width="2" height="2" fill="#fff"/>
<rect x="826" y="482" width="2" height="2" fill="#fff"/>
<polyline points="829.5,470.5 892.5,470.5" fill="none" stroke="#454545" stroke-width="1"/>
<polygon points="887.0,467.7 892.5,470.5 887.0,473.3" fill="#000"/>
<polyline points="829.5,491.5 892.5,491.5" fill="none" stroke="#454545" stroke-width="1"/>
<polygon points="887.0,488.7 892.5,491.5 887.0,494.3" fill="#000"/>
<text x="832" y="478" font-size="5.8" text-anchor="start" fill="#222" font-weight="normal" textLength="39.5" lengthAdjust="spacing">&lt;Vsm_up_B&gt;</text>
<text x="832" y="499" font-size="5.8" text-anchor="start" fill="#222" font-weight="normal" textLength="24" lengthAdjust="spacing">&lt;Iup_B&gt;</text>
<rect x="893.5" y="433.5" width="75" height="93" fill="none" stroke="#b8b8b8" stroke-width="1"/>
<rect x="892.5" y="432.5" width="75" height="93" fill="#fff" stroke="#383838" stroke-width="1"/>
<rect x="893" y="506" width="74" height="19" fill="#f00"/>
<text x="929" y="442" font-size="7" text-anchor="middle" fill="#1e1e1e" font-weight="normal" >BB1</text>
<text x="894" y="450.7" font-size="7.2" text-anchor="start" fill="#1a1a1a" font-weight="normal" >m (from 0 to 4)</text>
<text x="894" y="472.2" font-size="7.2" text-anchor="start" fill="#1a1a1a" font-weight="normal" >sim V (CH: 0,1,2,3)</text>
<text x="894" y="493.3" font-size="7.2" text-anchor="start" fill="#1a1a1a" font-weight="normal" >sim I (CH: 12)</text>
<text x="894" y="515" font-size="6.5" text-anchor="start" fill="#000" font-weight="normal" >&gt;</text>
<text x="929" y="517" font-size="7.5" text-anchor="middle" fill="#fff" font-weight="normal" >SS</text>
<text x="929" y="523" font-size="7.5" text-anchor="middle" fill="#fff" font-weight="normal" >PWM</text>
<circle cx="878.5" cy="513.5" r="2" fill="#000"/>
<polyline points="878.5,513.5 892.5,513.5" fill="none" stroke="#454545" stroke-width="1"/>
<polygon points="887.0,510.7 892.5,513.5 887.0,516.3" fill="#000"/>
<polyline points="967.5,442.5 991.5,442.5" fill="none" stroke="#454545" stroke-width="1"/>
<polygon points="986.0,439.7 991.5,442.5 986.0,445.3" fill="#000"/>
<text x="965" y="444.3" font-size="7" text-anchor="end" fill="#1a1a1a" font-weight="normal" >0H</text>
<polyline points="967.5,452.5 991.5,452.5" fill="none" stroke="#454545" stroke-width="1"/>
<polygon points="986.0,449.7 991.5,452.5 986.0,455.3" fill="#000"/>
<text x="965" y="454.3" font-size="7" text-anchor="end" fill="#1a1a1a" font-weight="normal" >0L</text>
<polyline points="967.5,463.5 991.5,463.5" fill="none" stroke="#454545" stroke-width="1"/>
<polygon points="986.0,460.7 991.5,463.5 986.0,466.3" fill="#000"/>
<text x="965" y="465.3" font-size="7" text-anchor="end" fill="#1a1a1a" font-weight="normal" >1H</text>
<polyline points="967.5,474.5 991.5,474.5" fill="none" stroke="#454545" stroke-width="1"/>
<polygon points="986.0,471.7 991.5,474.5 986.0,477.3" fill="#000"/>
<text x="965" y="476.3" font-size="7" text-anchor="end" fill="#1a1a1a" font-weight="normal" >1L</text>
<polyline points="967.5,484.5 991.5,484.5" fill="none" stroke="#454545" stroke-width="1"/>
<polygon points="986.0,481.7 991.5,484.5 986.0,487.3" fill="#000"/>
<text x="965" y="486.3" font-size="7" text-anchor="end" fill="#1a1a1a" font-weight="normal" >2H</text>
<polyline points="967.5,495.5 991.5,495.5" fill="none" stroke="#454545" stroke-width="1"/>
<polygon points="986.0,492.7 991.5,495.5 986.0,498.3" fill="#000"/>
<text x="965" y="497.3" font-size="7" text-anchor="end" fill="#1a1a1a" font-weight="normal" >2L</text>
<polyline points="967.5,505.5 991.5,505.5" fill="none" stroke="#454545" stroke-width="1"/>
<polygon points="986.0,502.7 991.5,505.5 986.0,508.3" fill="#000"/>
<text x="965" y="507.3" font-size="7" text-anchor="end" fill="#000" font-weight="normal" >3H</text>
<polyline points="967.5,516.5 991.5,516.5" fill="none" stroke="#454545" stroke-width="1"/>
<polygon points="986.0,513.7 991.5,516.5 986.0,519.3" fill="#000"/>
<text x="965" y="518.3" font-size="7" text-anchor="end" fill="#000" font-weight="normal" >3L</text>
<rect x="992" y="433" width="4" height="92" fill="#000"/>
<rect x="996" y="434" width="1" height="92" fill="#9a9a9a"/>
<polyline points="996.5,481.5 1023.5,481.5" fill="none" stroke="#454545" stroke-width="1"/>
<polygon points="1018.0,478.7 1023.5,481.5 1018.0,484.3" fill="#000"/>
<rect x="779.5" y="536.5" width="29" height="27" fill="none" stroke="#b8b8b8" stroke-width="1"/>
<rect x="778.5" y="535.5" width="29" height="27" fill="#fff" stroke="#383838" stroke-width="1"/>
<rect x="781.5" y="541.5" width="3" height="5" fill="#fff" stroke="#000" stroke-width="1"/>
<rect x="781" y="550" width="4" height="6" fill="#000"/>
<rect x="801" y="546" width="4" height="6" fill="#000"/>
<line x1="785" y1="553" x2="801" y2="549" stroke="#000" stroke-width="0.9"/>
<polyline points="807.5,549.5 892.5,549.5" fill="none" stroke="#454545" stroke-width="1"/>
<polygon points="887.0,546.7 892.5,549.5 887.0,552.3" fill="#000"/>
<polygon points="778.5,573.5 807.5,573.5 814.5,581.0 807.5,588.5 778.5,588.5" fill="#fff" stroke="#000" stroke-width="1"/>
<text x="793.5" y="582.8" font-size="7.5" text-anchor="middle" fill="#1e1e1e" font-weight="normal" >[simdata]</text>
<polyline points="814.5,581.5 824.5,581.5" fill="none" stroke="#a4a4a4" stroke-width="4.4" stroke-linejoin="round"/>
<polyline points="814.5,581.5 824.5,581.5" fill="none" stroke="#444" stroke-width="1"/>
<polygon points="820.0,578.7 825.5,581.5 820.0,584.3" fill="#000"/>
<rect x="825" y="560" width="4" height="42" fill="#000"/>
<rect x="829" y="561" width="1" height="42" fill="#9a9a9a"/>
<rect x="826" y="578" width="2" height="2" fill="#fff"/>
<rect x="826" y="582" width="2" height="2" fill="#fff"/>
<polyline points="829.5,570.5 892.5,570.5" fill="none" stroke="#454545" stroke-width="1"/>
<polygon points="887.0,567.7 892.5,570.5 887.0,573.3" fill="#000"/>
<polyline points="829.5,591.5 892.5,591.5" fill="none" stroke="#454545" stroke-width="1"/>
<polygon points="887.0,588.7 892.5,591.5 887.0,594.3" fill="#000"/>
<text x="832" y="578" font-size="5.8" text-anchor="start" fill="#222" font-weight="normal" textLength="41.5" lengthAdjust="spacing">&lt;Vsm_low_B&gt;</text>
<text x="832" y="599" font-size="5.8" text-anchor="start" fill="#222" font-weight="normal" textLength="26" lengthAdjust="spacing">&lt;Ilow_B&gt;</text>
<rect x="893.5" y="533.5" width="75" height="93" fill="none" stroke="#b8b8b8" stroke-width="1"/>
<rect x="892.5" y="532.5" width="75" height="93" fill="#fff" stroke="#383838" stroke-width="1"/>
<rect x="893" y="606" width="74" height="19" fill="#f00"/>
<text x="929" y="542" font-size="7" text-anchor="middle" fill="#1e1e1e" font-weight="normal" >BB1</text>
<text x="894" y="550.7" font-size="7.2" text-anchor="start" fill="#1a1a1a" font-weight="normal" >m (from 0 to 4)</text>
<text x="894" y="572.2" font-size="7.2" text-anchor="start" fill="#1a1a1a" font-weight="normal" >sim V (CH: 4,5,6,7)</text>
<text x="894" y="593.3" font-size="7.2" text-anchor="start" fill="#1a1a1a" font-weight="normal" >sim I (CH: 13)</text>
<text x="894" y="615" font-size="6.5" text-anchor="start" fill="#000" font-weight="normal" >&gt;</text>
<text x="929" y="617" font-size="7.5" text-anchor="middle" fill="#fff" font-weight="normal" >SS</text>
<text x="929" y="623" font-size="7.5" text-anchor="middle" fill="#fff" font-weight="normal" >PWM</text>
<circle cx="878.5" cy="613.5" r="2" fill="#000"/>
<polyline points="878.5,613.5 892.5,613.5" fill="none" stroke="#454545" stroke-width="1"/>
<polygon points="887.0,610.7 892.5,613.5 887.0,616.3" fill="#000"/>
<polyline points="967.5,542.5 991.5,542.5" fill="none" stroke="#454545" stroke-width="1"/>
<polygon points="986.0,539.7 991.5,542.5 986.0,545.3" fill="#000"/>
<text x="965" y="544.3" font-size="7" text-anchor="end" fill="#1a1a1a" font-weight="normal" >4H</text>
<polyline points="967.5,552.5 991.5,552.5" fill="none" stroke="#454545" stroke-width="1"/>
<polygon points="986.0,549.7 991.5,552.5 986.0,555.3" fill="#000"/>
<text x="965" y="554.3" font-size="7" text-anchor="end" fill="#1a1a1a" font-weight="normal" >4L</text>
<polyline points="967.5,563.5 991.5,563.5" fill="none" stroke="#454545" stroke-width="1"/>
<polygon points="986.0,560.7 991.5,563.5 986.0,566.3" fill="#000"/>
<text x="965" y="565.3" font-size="7" text-anchor="end" fill="#1a1a1a" font-weight="normal" >5H</text>
<polyline points="967.5,574.5 991.5,574.5" fill="none" stroke="#454545" stroke-width="1"/>
<polygon points="986.0,571.7 991.5,574.5 986.0,577.3" fill="#000"/>
<text x="965" y="576.3" font-size="7" text-anchor="end" fill="#1a1a1a" font-weight="normal" >5L</text>
<polyline points="967.5,584.5 991.5,584.5" fill="none" stroke="#454545" stroke-width="1"/>
<polygon points="986.0,581.7 991.5,584.5 986.0,587.3" fill="#000"/>
<text x="965" y="586.3" font-size="7" text-anchor="end" fill="#1a1a1a" font-weight="normal" >6H</text>
<polyline points="967.5,595.5 991.5,595.5" fill="none" stroke="#454545" stroke-width="1"/>
<polygon points="986.0,592.7 991.5,595.5 986.0,598.3" fill="#000"/>
<text x="965" y="597.3" font-size="7" text-anchor="end" fill="#1a1a1a" font-weight="normal" >6L</text>
<polyline points="967.5,605.5 991.5,605.5" fill="none" stroke="#454545" stroke-width="1"/>
<polygon points="986.0,602.7 991.5,605.5 986.0,608.3" fill="#000"/>
<text x="965" y="607.3" font-size="7" text-anchor="end" fill="#000" font-weight="normal" >7H</text>
<polyline points="967.5,616.5 991.5,616.5" fill="none" stroke="#454545" stroke-width="1"/>
<polygon points="986.0,613.7 991.5,616.5 986.0,619.3" fill="#000"/>
<text x="965" y="618.3" font-size="7" text-anchor="end" fill="#000" font-weight="normal" >7L</text>
<rect x="992" y="533" width="4" height="92" fill="#000"/>
<rect x="996" y="534" width="1" height="92" fill="#9a9a9a"/>
<polyline points="996.5,581.5 1023.5,581.5" fill="none" stroke="#454545" stroke-width="1"/>
<polygon points="1018.0,578.7 1023.5,581.5 1018.0,584.3" fill="#000"/>
<rect x="779.5" y="636.5" width="29" height="27" fill="none" stroke="#b8b8b8" stroke-width="1"/>
<rect x="778.5" y="635.5" width="29" height="27" fill="#fff" stroke="#383838" stroke-width="1"/>
<rect x="781" y="641" width="4" height="6" fill="#000"/>
<rect x="781.5" y="650.5" width="3" height="5" fill="#fff" stroke="#000" stroke-width="1"/>
<rect x="801" y="646" width="4" height="6" fill="#000"/>
<line x1="785" y1="644" x2="801" y2="649" stroke="#000" stroke-width="0.9"/>
<polyline points="807.5,649.5 892.5,649.5" fill="none" stroke="#454545" stroke-width="1"/>
<polygon points="887.0,646.7 892.5,649.5 887.0,652.3" fill="#000"/>
<polygon points="778.5,673.5 807.5,673.5 814.5,681.0 807.5,688.5 778.5,688.5" fill="#fff" stroke="#000" stroke-width="1"/>
<text x="793.5" y="682.8" font-size="7.5" text-anchor="middle" fill="#1e1e1e" font-weight="normal" >[simdata]</text>
<polyline points="814.5,681.5 824.5,681.5" fill="none" stroke="#a4a4a4" stroke-width="4.4" stroke-linejoin="round"/>
<polyline points="814.5,681.5 824.5,681.5" fill="none" stroke="#444" stroke-width="1"/>
<polygon points="820.0,678.7 825.5,681.5 820.0,684.3" fill="#000"/>
<rect x="825" y="660" width="4" height="42" fill="#000"/>
<rect x="829" y="661" width="1" height="42" fill="#9a9a9a"/>
<rect x="826" y="678" width="2" height="2" fill="#fff"/>
<rect x="826" y="682" width="2" height="2" fill="#fff"/>
<polyline points="829.5,670.5 892.5,670.5" fill="none" stroke="#454545" stroke-width="1"/>
<polygon points="887.0,667.7 892.5,670.5 887.0,673.3" fill="#000"/>
<polyline points="829.5,691.5 892.5,691.5" fill="none" stroke="#454545" stroke-width="1"/>
<polygon points="887.0,688.7 892.5,691.5 887.0,694.3" fill="#000"/>
<text x="832" y="678" font-size="5.8" text-anchor="start" fill="#222" font-weight="normal" textLength="39.5" lengthAdjust="spacing">&lt;Vsm_up_C&gt;</text>
<text x="832" y="699" font-size="5.8" text-anchor="start" fill="#222" font-weight="normal" textLength="24" lengthAdjust="spacing">&lt;Iup_C&gt;</text>
<rect x="893.5" y="633.5" width="75" height="93" fill="none" stroke="#b8b8b8" stroke-width="1"/>
<rect x="892.5" y="632.5" width="75" height="93" fill="#fff" stroke="#383838" stroke-width="1"/>
<rect x="893" y="706" width="74" height="19" fill="#f00"/>
<text x="929" y="642" font-size="7" text-anchor="middle" fill="#1e1e1e" font-weight="normal" >BB2</text>
<text x="894" y="650.7" font-size="7.2" text-anchor="start" fill="#1a1a1a" font-weight="normal" >m (from 0 to 4)</text>
<text x="894" y="672.2" font-size="7.2" text-anchor="start" fill="#1a1a1a" font-weight="normal" >sim V (CH: 0,1,2,3)</text>
<text x="894" y="693.3" font-size="7.2" text-anchor="start" fill="#1a1a1a" font-weight="normal" >sim I (CH: 12)</text>
<text x="894" y="715" font-size="6.5" text-anchor="start" fill="#000" font-weight="normal" >&gt;</text>
<text x="929" y="717" font-size="7.5" text-anchor="middle" fill="#fff" font-weight="normal" >SS</text>
<text x="929" y="723" font-size="7.5" text-anchor="middle" fill="#fff" font-weight="normal" >PWM</text>
<circle cx="878.5" cy="713.5" r="2" fill="#000"/>
<polyline points="878.5,713.5 892.5,713.5" fill="none" stroke="#454545" stroke-width="1"/>
<polygon points="887.0,710.7 892.5,713.5 887.0,716.3" fill="#000"/>
<polyline points="967.5,642.5 991.5,642.5" fill="none" stroke="#454545" stroke-width="1"/>
<polygon points="986.0,639.7 991.5,642.5 986.0,645.3" fill="#000"/>
<text x="965" y="644.3" font-size="7" text-anchor="end" fill="#1a1a1a" font-weight="normal" >0H</text>
<polyline points="967.5,652.5 991.5,652.5" fill="none" stroke="#454545" stroke-width="1"/>
<polygon points="986.0,649.7 991.5,652.5 986.0,655.3" fill="#000"/>
<text x="965" y="654.3" font-size="7" text-anchor="end" fill="#1a1a1a" font-weight="normal" >0L</text>
<polyline points="967.5,663.5 991.5,663.5" fill="none" stroke="#454545" stroke-width="1"/>
<polygon points="986.0,660.7 991.5,663.5 986.0,666.3" fill="#000"/>
<text x="965" y="665.3" font-size="7" text-anchor="end" fill="#1a1a1a" font-weight="normal" >1H</text>
<polyline points="967.5,674.5 991.5,674.5" fill="none" stroke="#454545" stroke-width="1"/>
<polygon points="986.0,671.7 991.5,674.5 986.0,677.3" fill="#000"/>
<text x="965" y="676.3" font-size="7" text-anchor="end" fill="#1a1a1a" font-weight="normal" >1L</text>
<polyline points="967.5,684.5 991.5,684.5" fill="none" stroke="#454545" stroke-width="1"/>
<polygon points="986.0,681.7 991.5,684.5 986.0,687.3" fill="#000"/>
<text x="965" y="686.3" font-size="7" text-anchor="end" fill="#1a1a1a" font-weight="normal" >2H</text>
<polyline points="967.5,695.5 991.5,695.5" fill="none" stroke="#454545" stroke-width="1"/>
<polygon points="986.0,692.7 991.5,695.5 986.0,698.3" fill="#000"/>
<text x="965" y="697.3" font-size="7" text-anchor="end" fill="#1a1a1a" font-weight="normal" >2L</text>
<polyline points="967.5,705.5 991.5,705.5" fill="none" stroke="#454545" stroke-width="1"/>
<polygon points="986.0,702.7 991.5,705.5 986.0,708.3" fill="#000"/>
<text x="965" y="707.3" font-size="7" text-anchor="end" fill="#000" font-weight="normal" >3H</text>
<polyline points="967.5,716.5 991.5,716.5" fill="none" stroke="#454545" stroke-width="1"/>
<polygon points="986.0,713.7 991.5,716.5 986.0,719.3" fill="#000"/>
<text x="965" y="718.3" font-size="7" text-anchor="end" fill="#000" font-weight="normal" >3L</text>
<rect x="992" y="633" width="4" height="92" fill="#000"/>
<rect x="996" y="634" width="1" height="92" fill="#9a9a9a"/>
<polyline points="996.5,681.5 1023.5,681.5" fill="none" stroke="#454545" stroke-width="1"/>
<polygon points="1018.0,678.7 1023.5,681.5 1018.0,684.3" fill="#000"/>
<rect x="779.5" y="735.5" width="29" height="27" fill="none" stroke="#b8b8b8" stroke-width="1"/>
<rect x="778.5" y="734.5" width="29" height="27" fill="#fff" stroke="#383838" stroke-width="1"/>
<rect x="781.5" y="740.5" width="3" height="5" fill="#fff" stroke="#000" stroke-width="1"/>
<rect x="781" y="749" width="4" height="6" fill="#000"/>
<rect x="801" y="745" width="4" height="6" fill="#000"/>
<line x1="785" y1="752" x2="801" y2="748" stroke="#000" stroke-width="0.9"/>
<polyline points="807.5,748.5 892.5,748.5" fill="none" stroke="#454545" stroke-width="1"/>
<polygon points="887.0,745.7 892.5,748.5 887.0,751.3" fill="#000"/>
<polygon points="778.5,772.5 807.5,772.5 814.5,780.0 807.5,787.5 778.5,787.5" fill="#fff" stroke="#000" stroke-width="1"/>
<text x="793.5" y="781.8" font-size="7.5" text-anchor="middle" fill="#1e1e1e" font-weight="normal" >[simdata]</text>
<polyline points="814.5,780.5 824.5,780.5" fill="none" stroke="#a4a4a4" stroke-width="4.4" stroke-linejoin="round"/>
<polyline points="814.5,780.5 824.5,780.5" fill="none" stroke="#444" stroke-width="1"/>
<polygon points="820.0,777.7 825.5,780.5 820.0,783.3" fill="#000"/>
<rect x="825" y="759" width="4" height="42" fill="#000"/>
<rect x="829" y="760" width="1" height="42" fill="#9a9a9a"/>
<rect x="826" y="777" width="2" height="2" fill="#fff"/>
<rect x="826" y="781" width="2" height="2" fill="#fff"/>
<polyline points="829.5,769.5 892.5,769.5" fill="none" stroke="#454545" stroke-width="1"/>
<polygon points="887.0,766.7 892.5,769.5 887.0,772.3" fill="#000"/>
<polyline points="829.5,790.5 892.5,790.5" fill="none" stroke="#454545" stroke-width="1"/>
<polygon points="887.0,787.7 892.5,790.5 887.0,793.3" fill="#000"/>
<text x="832" y="777" font-size="5.8" text-anchor="start" fill="#222" font-weight="normal" textLength="41.5" lengthAdjust="spacing">&lt;Vsm_low_C&gt;</text>
<text x="832" y="798" font-size="5.8" text-anchor="start" fill="#222" font-weight="normal" textLength="26" lengthAdjust="spacing">&lt;Ilow_C&gt;</text>
<rect x="893.5" y="732.5" width="75" height="93" fill="none" stroke="#b8b8b8" stroke-width="1"/>
<rect x="892.5" y="731.5" width="75" height="93" fill="#fff" stroke="#383838" stroke-width="1"/>
<rect x="893" y="805" width="74" height="19" fill="#f00"/>
<text x="929" y="741" font-size="7" text-anchor="middle" fill="#1e1e1e" font-weight="normal" >BB2</text>
<text x="894" y="749.7" font-size="7.2" text-anchor="start" fill="#1a1a1a" font-weight="normal" >m (from 0 to 4)</text>
<text x="894" y="771.2" font-size="7.2" text-anchor="start" fill="#1a1a1a" font-weight="normal" >sim V (CH: 4,5,6,7)</text>
<text x="894" y="792.3" font-size="7.2" text-anchor="start" fill="#1a1a1a" font-weight="normal" >sim I (CH: 13)</text>
<text x="894" y="814" font-size="6.5" text-anchor="start" fill="#000" font-weight="normal" >&gt;</text>
<text x="929" y="816" font-size="7.5" text-anchor="middle" fill="#fff" font-weight="normal" >SS</text>
<text x="929" y="822" font-size="7.5" text-anchor="middle" fill="#fff" font-weight="normal" >PWM</text>
<polyline points="967.5,741.5 991.5,741.5" fill="none" stroke="#454545" stroke-width="1"/>
<polygon points="986.0,738.7 991.5,741.5 986.0,744.3" fill="#000"/>
<text x="965" y="743.3" font-size="7" text-anchor="end" fill="#1a1a1a" font-weight="normal" >4H</text>
<polyline points="967.5,751.5 991.5,751.5" fill="none" stroke="#454545" stroke-width="1"/>
<polygon points="986.0,748.7 991.5,751.5 986.0,754.3" fill="#000"/>
<text x="965" y="753.3" font-size="7" text-anchor="end" fill="#1a1a1a" font-weight="normal" >4L</text>
<polyline points="967.5,762.5 991.5,762.5" fill="none" stroke="#454545" stroke-width="1"/>
<polygon points="986.0,759.7 991.5,762.5 986.0,765.3" fill="#000"/>
<text x="965" y="764.3" font-size="7" text-anchor="end" fill="#1a1a1a" font-weight="normal" >5H</text>
<polyline points="967.5,773.5 991.5,773.5" fill="none" stroke="#454545" stroke-width="1"/>
<polygon points="986.0,770.7 991.5,773.5 986.0,776.3" fill="#000"/>
<text x="965" y="775.3" font-size="7" text-anchor="end" fill="#1a1a1a" font-weight="normal" >5L</text>
<polyline points="967.5,783.5 991.5,783.5" fill="none" stroke="#454545" stroke-width="1"/>
<polygon points="986.0,780.7 991.5,783.5 986.0,786.3" fill="#000"/>
<text x="965" y="785.3" font-size="7" text-anchor="end" fill="#1a1a1a" font-weight="normal" >6H</text>
<polyline points="967.5,794.5 991.5,794.5" fill="none" stroke="#454545" stroke-width="1"/>
<polygon points="986.0,791.7 991.5,794.5 986.0,797.3" fill="#000"/>
<text x="965" y="796.3" font-size="7" text-anchor="end" fill="#1a1a1a" font-weight="normal" >6L</text>
<polyline points="967.5,804.5 991.5,804.5" fill="none" stroke="#454545" stroke-width="1"/>
<polygon points="986.0,801.7 991.5,804.5 986.0,807.3" fill="#000"/>
<text x="965" y="806.3" font-size="7" text-anchor="end" fill="#000" font-weight="normal" >7H</text>
<polyline points="967.5,815.5 991.5,815.5" fill="none" stroke="#454545" stroke-width="1"/>
<polygon points="986.0,812.7 991.5,815.5 986.0,818.3" fill="#000"/>
<text x="965" y="817.3" font-size="7" text-anchor="end" fill="#000" font-weight="normal" >7L</text>
<rect x="992" y="732" width="4" height="92" fill="#000"/>
<rect x="996" y="733" width="1" height="92" fill="#9a9a9a"/>
<polyline points="996.5,780.5 1023.5,780.5" fill="none" stroke="#454545" stroke-width="1"/>
<polygon points="1018.0,777.7 1023.5,780.5 1018.0,783.3" fill="#000"/>
<rect x="1024" y="231" width="5" height="699" fill="#000"/>
<rect x="1029" y="232" width="1" height="699" fill="#9a9a9a"/>
<polyline points="1029.5,581.5 1055.5,581.5" fill="none" stroke="#454545" stroke-width="1"/>
<polygon points="1050.0,578.7 1055.5,581.5 1050.0,584.3" fill="#000"/>
<rect x="1055.5" y="575.5" width="23" height="10" rx="5" fill="#fff" stroke="#000"/>
<text x="1067" y="583.5" font-size="7" text-anchor="middle" fill="#1e1e1e" font-weight="normal" >1</text>
<text x="1067" y="571" font-size="6.5" text-anchor="middle" fill="#333" font-weight="normal" >Outputs</text>
<rect x="828.5" y="854.5" width="11" height="11" fill="none" stroke="#b8b8b8" stroke-width="1"/>
<rect x="827.5" y="853.5" width="11" height="11" fill="#fff" stroke="#383838" stroke-width="1"/>
<rect x="828" y="860" width="10" height="4" fill="#f00"/>
<polyline points="829.5,861.5 832.5,861.5 832.5,856.5 836.5,856.5" fill="none" stroke="#454545" stroke-width="1"/>
<text x="825" y="858" font-size="6.8" text-anchor="end" fill="#333" font-weight="normal" >precharge_relay</text>
<text x="825" y="864.5" font-size="6.8" text-anchor="end" fill="#333" font-weight="normal" >0</text>
<polyline points="838.5,859.5 892.5,859.5" fill="none" stroke="#454545" stroke-width="1"/>
<polygon points="887.0,856.7 892.5,859.5 887.0,862.3" fill="#000"/>
<rect x="893.5" y="844.5" width="47" height="30" fill="none" stroke="#b8b8b8" stroke-width="1"/>
<rect x="892.5" y="843.5" width="47" height="30" fill="#fff" stroke="#383838" stroke-width="1"/>
<rect x="893" y="864" width="46" height="9" fill="#f00"/>
<text x="915.5" y="852" font-size="7" text-anchor="middle" fill="#1e1e1e" font-weight="normal" >BB0</text>
<text x="894" y="860.5" font-size="7.5" text-anchor="start" fill="#1e1e1e" font-weight="normal" >GPO0</text>
<text x="936" y="871.5" font-size="7.5" text-anchor="end" fill="#fff" font-weight="normal" >GPO</text>
<polyline points="939.5,859.5 967.5,859.5" fill="none" stroke="#454545" stroke-width="1"/>
<polygon points="962.0,856.7 967.5,859.5 962.0,862.3" fill="#000"/>
<rect x="828.5" y="893.5" width="11" height="11" fill="none" stroke="#b8b8b8" stroke-width="1"/>
<rect x="827.5" y="892.5" width="11" height="11" fill="#fff" stroke="#383838" stroke-width="1"/>
<rect x="828" y="899" width="10" height="4" fill="#f00"/>
<polyline points="829.5,900.5 832.5,900.5 832.5,895.5 836.5,895.5" fill="none" stroke="#454545" stroke-width="1"/>
<text x="825" y="897" font-size="6.8" text-anchor="end" fill="#333" font-weight="normal" >bypass_relay</text>
<text x="825" y="903.5" font-size="6.8" text-anchor="end" fill="#333" font-weight="normal" >0</text>
<polyline points="838.5,898.5 892.5,898.5" fill="none" stroke="#454545" stroke-width="1"/>
<polygon points="887.0,895.7 892.5,898.5 887.0,901.3" fill="#000"/>
<rect x="893.5" y="883.5" width="47" height="30" fill="none" stroke="#b8b8b8" stroke-width="1"/>
<rect x="892.5" y="882.5" width="47" height="30" fill="#fff" stroke="#383838" stroke-width="1"/>
<rect x="893" y="903" width="46" height="9" fill="#f00"/>
<text x="915.5" y="891" font-size="7" text-anchor="middle" fill="#1e1e1e" font-weight="normal" >BB0</text>
<text x="894" y="899.5" font-size="7.5" text-anchor="start" fill="#1e1e1e" font-weight="normal" >GPO1</text>
<text x="936" y="910.5" font-size="7.5" text-anchor="end" fill="#fff" font-weight="normal" >GPO</text>
<polyline points="939.5,898.5 967.5,898.5" fill="none" stroke="#454545" stroke-width="1"/>
<polygon points="962.0,895.7 967.5,898.5 962.0,901.3" fill="#000"/>
<rect x="967" y="839" width="4" height="78" fill="#000"/>
<rect x="971" y="840" width="1" height="78" fill="#9a9a9a"/>
<polyline points="971.5,880.5 985.5,880.5" fill="none" stroke="#454545" stroke-width="1"/>
<polygon points="980.0,877.7 985.5,880.5 980.0,883.3" fill="#000"/>
<rect x="986.5" y="873.5" width="32" height="15" fill="none" stroke="#b8b8b8" stroke-width="1"/>
<rect x="985.5" y="872.5" width="32" height="15" fill="#fff" stroke="#383838" stroke-width="1"/>
<text x="1001" y="882.5" font-size="6.6" text-anchor="middle" fill="#1e1e1e" font-weight="normal" >Convert</text>
<polyline points="1017.5,880.5 1024.5,880.5" fill="none" stroke="#454545" stroke-width="1"/>
<polygon points="1019.0,877.7 1024.5,880.5 1019.0,883.3" fill="#000"/>
<rect x="264" y="285" width="173" height="22" fill="#d8e8f8" fill-opacity="0.32"/>
<rect x="264" y="285" width="22" height="22" fill="#d0e0f0" fill-opacity="0.2"/>
<polygon points="275,290 279,293.5 275,297" fill="#999" fill-opacity="0.2"/>
<text x="296" y="300" font-size="12.4" text-anchor="start" fill="#c8b8b8" font-weight="normal" fill-opacity="0.28" textLength="69" lengthAdjust="spacingAndGlyphs">Window Snip</text>
</svg>
</body></html>
